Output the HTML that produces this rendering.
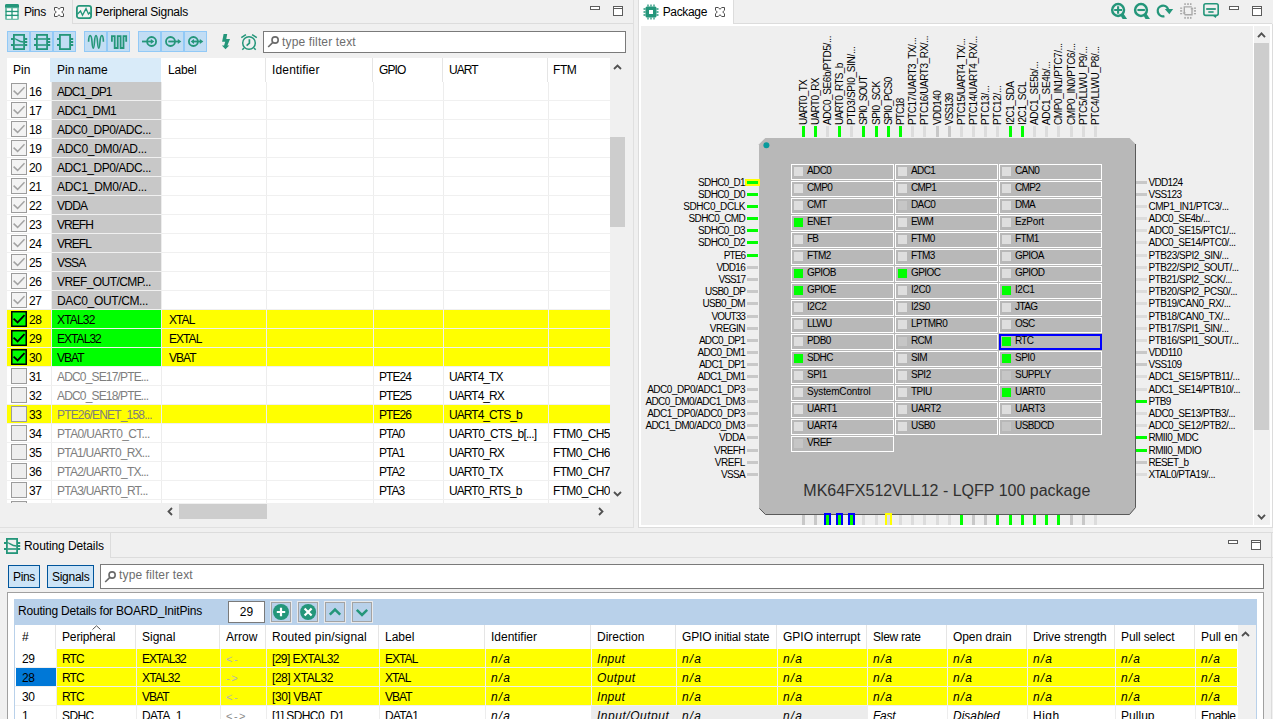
<!DOCTYPE html>
<html><head><meta charset="utf-8"><title>Pins</title><style>
html,body{margin:0;padding:0;}
html{width:1273px;height:719px;overflow:clip;background:#f0f0f0;}
body{width:1273px;height:719px;overflow:clip;position:relative;background:#f0f0f0;font-family:"Liberation Sans",sans-serif;font-size:12px;color:#000;}
div{position:absolute;box-sizing:border-box;}
.t{white-space:nowrap;}
.p{white-space:nowrap;font-size:10px;line-height:11px;height:11px;color:#000;}
svg{position:absolute;overflow:visible;}
</style></head><body>
<div style="left:72px;top:23px;width:562px;height:1px;background:#dcdcdc;"></div>
<div style="left:72px;top:0px;width:1px;height:24px;background:#dcdcdc;"></div>
<div style="left:633px;top:0px;width:1px;height:528px;background:#e0e0e0;"></div>
<div style="left:0px;top:527px;width:634px;height:1px;background:#e0e0e0;"></div>
<div class="t" style="left:24px;top:3px;line-height:18px;height:18px;letter-spacing:-0.4px;">Pins</div>
<div class="t" style="left:95px;top:3px;line-height:18px;height:18px;letter-spacing:-0.25px;">Peripheral Signals</div>
<svg style="left:54px;top:7px" width="10" height="10" viewBox="0 0 10 10"><path d="M0.5 0.5H3.3L5 2.3L6.7 0.5H9.5V3.3L7.7 5L9.5 6.7V9.5H6.7L5 7.7L3.3 9.5H0.5V6.7L2.3 5L0.5 3.3Z" fill="#fff" stroke="#4f4f4f" stroke-width="1"/></svg>
<svg style="left:5px;top:4px" width="14" height="16" viewBox="0 0 14 16"><rect x="0" y="0" width="14" height="16" rx="1.6" fill="#74bfab"/><path d="M0 3.6V1.6A1.6 1.6 0 0 1 1.6 0H12.4A1.6 1.6 0 0 1 14 1.6V3.6Z" fill="#24967a"/><path d="M0.6 7.4H13.4M0.6 11.3H13.4" stroke="#24967a" stroke-width="1.5"/><g fill="#fff"><rect x="2" y="4.3" width="4" height="2.4"/><rect x="8" y="4.3" width="4.1" height="2.4"/><rect x="2" y="8.2" width="4" height="2.4"/><rect x="8" y="8.2" width="4.1" height="2.4"/><rect x="2" y="12.1" width="4" height="2.6"/><rect x="8" y="12.1" width="4.1" height="2.6"/></g></svg>
<svg style="left:76px;top:5px" width="16" height="14" viewBox="0 0 16 14"><rect x="0.9" y="0.9" width="14.2" height="12.2" rx="2.2" fill="#f4f4f4" stroke="#24967a" stroke-width="1.8"/><path d="M1.4 9.3L4.5 6L6.5 10.3L10 3.6L12.4 9.1L13.6 7.6L15 9.5" stroke="#24967a" stroke-width="1.3" fill="none"/></svg>
<div style="left:590px;top:6px;width:10px;height:4px;background:#fff;border:1px solid #5c5c5c;"></div>
<div style="left:613px;top:6px;width:10px;height:10px;background:#fff;border:1px solid #5c5c5c;"></div>
<div style="left:613px;top:8px;width:10px;height:1px;background:#5c5c5c;"></div>
<div style="left:7px;top:31px;width:23px;height:21px;background:#c2ddf4;border:1px solid #92c9f6;"></div>
<div style="left:30px;top:31px;width:23px;height:21px;background:#c2ddf4;border:1px solid #92c9f6;"></div>
<div style="left:53px;top:31px;width:23px;height:21px;background:#c2ddf4;border:1px solid #92c9f6;"></div>
<div style="left:84px;top:31px;width:23px;height:21px;background:#c2ddf4;border:1px solid #92c9f6;"></div>
<div style="left:107px;top:31px;width:23px;height:21px;background:#c2ddf4;border:1px solid #92c9f6;"></div>
<div style="left:138px;top:31px;width:23px;height:21px;background:#c2ddf4;border:1px solid #92c9f6;"></div>
<div style="left:161px;top:31px;width:23px;height:21px;background:#c2ddf4;border:1px solid #92c9f6;"></div>
<div style="left:184px;top:31px;width:23px;height:21px;background:#c2ddf4;border:1px solid #92c9f6;"></div>
<svg style="left:7px;top:31px" width="23" height="21" viewBox="0 0 23 21" fill="none" stroke="#24967a"><rect x="6.9" y="3.9" width="10.2" height="14.2" stroke-width="1.8"/><path d="M4 8H6.5M4 14H6.5M17.5 8H20.2M17.5 11H20.2M17.5 14H20.2" stroke-width="1.9"/><path d="M7.5 14H16.5" stroke-width="1.6"/><path d="M7.5 7.6C10 8 11.5 11 16.5 11" stroke-width="1.4"/></svg>
<svg style="left:30px;top:31px" width="23" height="21" viewBox="0 0 23 21" fill="none" stroke="#24967a"><rect x="6.9" y="3.9" width="10.2" height="14.2" stroke-width="1.8"/><path d="M4 8H6.5M4 14H6.5M17.5 8H20.2M17.5 11H20.2M17.5 14H20.2" stroke-width="1.9"/><path d="M7.5 8H16.5M7.5 14H16.5" stroke-width="1.6"/></svg>
<svg style="left:53px;top:31px" width="23" height="21" viewBox="0 0 23 21" fill="none" stroke="#24967a"><rect x="6.9" y="3.9" width="10.2" height="14.2" stroke-width="1.8"/><path d="M4 8H6.5M4 14H6.5M17.5 8H20.2M17.5 11H20.2M17.5 14H20.2" stroke-width="1.9"/></svg>
<svg style="left:84px;top:31px" width="23" height="21" viewBox="0 0 23 21" fill="none" stroke="#24967a"><path d="M4.6 10.8C4.8 2.5 7.4 2.5 8 10.8C8.6 19.3 9.9 19.3 10.5 10.8C11.1 2.5 12.9 2.5 13.5 10.8C14.1 19.3 15.4 19.3 16 10.8C16.6 2.5 19.2 2.5 19.4 10.8" stroke-width="1.6"/></svg>
<svg style="left:107px;top:31px" width="23" height="21" viewBox="0 0 23 21" fill="none" stroke="#24967a"><path d="M4.9 10.8V5.1H7.7V17H10.7V5.1H13.6V17H16.5V5.1H19.2V10.8" stroke-width="1.8"/></svg>
<svg style="left:138px;top:31px" width="23" height="21" viewBox="0 0 23 21" fill="none" stroke="#24967a"><circle cx="13.6" cy="10.5" r="4.5" stroke-width="1.8"/><path d="M4 10.5H13.5" stroke-width="1.8"/><path d="M12.8 8.1L16.3 10.5L12.8 12.9Z" fill="#24967a" stroke="none"/></svg>
<svg style="left:161px;top:31px" width="23" height="21" viewBox="0 0 23 21" fill="none" stroke="#24967a"><circle cx="9.5" cy="10.5" r="4.5" stroke-width="1.8"/><path d="M7.3 10.5H17.5" stroke-width="1.8"/><path d="M16.8 8.1L20.3 10.5L16.8 12.9Z" fill="#24967a" stroke="none"/></svg>
<svg style="left:184px;top:31px" width="23" height="21" viewBox="0 0 23 21" fill="none" stroke="#24967a"><circle cx="9.4" cy="10.5" r="4.5" stroke-width="1.8"/><path d="M8.5 10.5H16.5" stroke-width="1.8"/><path d="M15.8 8.1L19.3 10.5L15.8 12.9Z" fill="#24967a" stroke="none"/><path d="M10 8.1L6.7 10.5L10 12.9Z" fill="#24967a" stroke="none"/></svg>
<svg style="left:0;top:0" width="270" height="60" viewBox="0 0 270 60"><path d="M223.6 34H227.2L226.3 38.9H230L227.4 45.4H229.3L225.5 49.3L221.9 45.4H224.1L225.2 41.8H222.1Z" fill="#24967a"/><g fill="none" stroke="#24967a" stroke-width="1.5"><circle cx="249" cy="43" r="6.3"/><path d="M249.4 39.3V43.2L246.6 45.6" stroke-width="1.7"/><path d="M241.3 37.7L245.9 34.6M252.1 34.6L256.8 37.7M244 48L242.3 49.8M254 48L255.7 49.8"/></g></svg>
<div style="left:263px;top:31px;width:363px;height:22px;background:#fff;border:1px solid #7a7a7a;"></div>
<svg style="left:267px;top:35px" width="12" height="13" viewBox="0 0 12 13" fill="none" stroke="#6a6a6a" stroke-width="1.6"><circle cx="8.1" cy="5" r="3.1"/><path d="M5.6 7.6L1.2 12" stroke-width="1.6"/></svg>
<div class="t" style="left:282px;top:33px;line-height:18px;height:18px;color:#6d6d6d;letter-spacing:0.15px;">type filter text</div>
<div style="left:7px;top:58px;width:603px;height:445px;background:#fff;"></div>
<div style="left:50px;top:58px;width:111px;height:24px;background:#d9ebf9;"></div>
<div class="t" style="left:13px;top:60px;line-height:20px;height:20px;">Pin</div>
<div class="t" style="left:57px;top:60px;line-height:20px;height:20px;">Pin name</div>
<div class="t" style="left:168px;top:60px;line-height:20px;height:20px;letter-spacing:-0.2px;">Label</div>
<div class="t" style="left:272px;top:60px;line-height:20px;height:20px;letter-spacing:0.15px;">Identifier</div>
<div class="t" style="left:379px;top:60px;line-height:20px;height:20px;letter-spacing:-0.902px;">GPIO</div>
<div class="t" style="left:449px;top:60px;line-height:20px;height:20px;letter-spacing:-0.95px;">UART</div>
<div class="t" style="left:553px;top:60px;line-height:20px;height:20px;letter-spacing:-0.427px;">FTM</div>
<div style="left:51px;top:82px;width:1px;height:421px;background:#ededed;"></div>
<div style="left:161px;top:82px;width:1px;height:421px;background:#ededed;"></div>
<div style="left:265px;top:58px;width:1px;height:24px;background:#e5e5e5;"></div>
<div style="left:266px;top:82px;width:1px;height:421px;background:#ededed;"></div>
<div style="left:372px;top:58px;width:1px;height:24px;background:#e5e5e5;"></div>
<div style="left:373px;top:82px;width:1px;height:421px;background:#ededed;"></div>
<div style="left:442px;top:58px;width:1px;height:24px;background:#e5e5e5;"></div>
<div style="left:443px;top:82px;width:1px;height:421px;background:#ededed;"></div>
<div style="left:547px;top:58px;width:1px;height:24px;background:#e5e5e5;"></div>
<div style="left:548px;top:82px;width:1px;height:421px;background:#ededed;"></div>
<div style="left:7px;top:100px;width:603px;height:1px;background:#f0f0f0;"></div>
<div style="left:52px;top:82px;width:109px;height:18px;background:#c8c8c8;"></div>
<svg style="left:11px;top:83px" width="16" height="16" viewBox="0 0 16 16"><rect x="0.5" y="0.5" width="15" height="15" fill="#f3f3f3" stroke="#9c9c9c"/><path d="M2.6 7.6L6.6 11.4L13.5 4.2" fill="none" stroke="#a2a2a2" stroke-width="1.5"/></svg>
<div class="t" style="left:29px;top:83px;line-height:19px;height:19px;letter-spacing:-0.5px;">16</div>
<div class="t" style="left:57px;top:83px;line-height:19px;height:19px;letter-spacing:-0.947px;width:104px;overflow:hidden;">ADC1_DP1</div>
<div style="left:7px;top:119px;width:603px;height:1px;background:#f0f0f0;"></div>
<div style="left:52px;top:101px;width:109px;height:18px;background:#c8c8c8;"></div>
<svg style="left:11px;top:102px" width="16" height="16" viewBox="0 0 16 16"><rect x="0.5" y="0.5" width="15" height="15" fill="#f3f3f3" stroke="#9c9c9c"/><path d="M2.6 7.6L6.6 11.4L13.5 4.2" fill="none" stroke="#a2a2a2" stroke-width="1.5"/></svg>
<div class="t" style="left:29px;top:102px;line-height:19px;height:19px;letter-spacing:-0.5px;">17</div>
<div class="t" style="left:57px;top:102px;line-height:19px;height:19px;letter-spacing:-0.617px;width:104px;overflow:hidden;">ADC1_DM1</div>
<div style="left:7px;top:138px;width:603px;height:1px;background:#f0f0f0;"></div>
<div style="left:52px;top:120px;width:109px;height:18px;background:#c8c8c8;"></div>
<svg style="left:11px;top:121px" width="16" height="16" viewBox="0 0 16 16"><rect x="0.5" y="0.5" width="15" height="15" fill="#f3f3f3" stroke="#9c9c9c"/><path d="M2.6 7.6L6.6 11.4L13.5 4.2" fill="none" stroke="#a2a2a2" stroke-width="1.5"/></svg>
<div class="t" style="left:29px;top:121px;line-height:19px;height:19px;letter-spacing:-0.5px;">18</div>
<div class="t" style="left:57px;top:121px;line-height:19px;height:19px;letter-spacing:-0.45px;width:104px;overflow:hidden;">ADC0_DP0/ADC...</div>
<div style="left:7px;top:157px;width:603px;height:1px;background:#f0f0f0;"></div>
<div style="left:52px;top:139px;width:109px;height:18px;background:#c8c8c8;"></div>
<svg style="left:11px;top:140px" width="16" height="16" viewBox="0 0 16 16"><rect x="0.5" y="0.5" width="15" height="15" fill="#f3f3f3" stroke="#9c9c9c"/><path d="M2.6 7.6L6.6 11.4L13.5 4.2" fill="none" stroke="#a2a2a2" stroke-width="1.5"/></svg>
<div class="t" style="left:29px;top:140px;line-height:19px;height:19px;letter-spacing:-0.5px;">19</div>
<div class="t" style="left:57px;top:140px;line-height:19px;height:19px;letter-spacing:-0.302px;width:104px;overflow:hidden;">ADC0_DM0/AD...</div>
<div style="left:7px;top:176px;width:603px;height:1px;background:#f0f0f0;"></div>
<div style="left:52px;top:158px;width:109px;height:18px;background:#c8c8c8;"></div>
<svg style="left:11px;top:159px" width="16" height="16" viewBox="0 0 16 16"><rect x="0.5" y="0.5" width="15" height="15" fill="#f3f3f3" stroke="#9c9c9c"/><path d="M2.6 7.6L6.6 11.4L13.5 4.2" fill="none" stroke="#a2a2a2" stroke-width="1.5"/></svg>
<div class="t" style="left:29px;top:159px;line-height:19px;height:19px;letter-spacing:-0.5px;">20</div>
<div class="t" style="left:57px;top:159px;line-height:19px;height:19px;letter-spacing:-0.45px;width:104px;overflow:hidden;">ADC1_DP0/ADC...</div>
<div style="left:7px;top:195px;width:603px;height:1px;background:#f0f0f0;"></div>
<div style="left:52px;top:177px;width:109px;height:18px;background:#c8c8c8;"></div>
<svg style="left:11px;top:178px" width="16" height="16" viewBox="0 0 16 16"><rect x="0.5" y="0.5" width="15" height="15" fill="#f3f3f3" stroke="#9c9c9c"/><path d="M2.6 7.6L6.6 11.4L13.5 4.2" fill="none" stroke="#a2a2a2" stroke-width="1.5"/></svg>
<div class="t" style="left:29px;top:178px;line-height:19px;height:19px;letter-spacing:-0.5px;">21</div>
<div class="t" style="left:57px;top:178px;line-height:19px;height:19px;letter-spacing:-0.302px;width:104px;overflow:hidden;">ADC1_DM0/AD...</div>
<div style="left:7px;top:214px;width:603px;height:1px;background:#f0f0f0;"></div>
<div style="left:52px;top:196px;width:109px;height:18px;background:#c8c8c8;"></div>
<svg style="left:11px;top:197px" width="16" height="16" viewBox="0 0 16 16"><rect x="0.5" y="0.5" width="15" height="15" fill="#f3f3f3" stroke="#9c9c9c"/><path d="M2.6 7.6L6.6 11.4L13.5 4.2" fill="none" stroke="#a2a2a2" stroke-width="1.5"/></svg>
<div class="t" style="left:29px;top:197px;line-height:19px;height:19px;letter-spacing:-0.5px;">22</div>
<div class="t" style="left:57px;top:197px;line-height:19px;height:19px;letter-spacing:-0.747px;width:104px;overflow:hidden;">VDDA</div>
<div style="left:7px;top:233px;width:603px;height:1px;background:#f0f0f0;"></div>
<div style="left:52px;top:215px;width:109px;height:18px;background:#c8c8c8;"></div>
<svg style="left:11px;top:216px" width="16" height="16" viewBox="0 0 16 16"><rect x="0.5" y="0.5" width="15" height="15" fill="#f3f3f3" stroke="#9c9c9c"/><path d="M2.6 7.6L6.6 11.4L13.5 4.2" fill="none" stroke="#a2a2a2" stroke-width="1.5"/></svg>
<div class="t" style="left:29px;top:216px;line-height:19px;height:19px;letter-spacing:-0.5px;">23</div>
<div class="t" style="left:57px;top:216px;line-height:19px;height:19px;letter-spacing:-0.95px;width:104px;overflow:hidden;">VREFH</div>
<div style="left:7px;top:252px;width:603px;height:1px;background:#f0f0f0;"></div>
<div style="left:52px;top:234px;width:109px;height:18px;background:#c8c8c8;"></div>
<svg style="left:11px;top:235px" width="16" height="16" viewBox="0 0 16 16"><rect x="0.5" y="0.5" width="15" height="15" fill="#f3f3f3" stroke="#9c9c9c"/><path d="M2.6 7.6L6.6 11.4L13.5 4.2" fill="none" stroke="#a2a2a2" stroke-width="1.5"/></svg>
<div class="t" style="left:29px;top:235px;line-height:19px;height:19px;letter-spacing:-0.5px;">24</div>
<div class="t" style="left:57px;top:235px;line-height:19px;height:19px;letter-spacing:-0.95px;width:104px;overflow:hidden;">VREFL</div>
<div style="left:7px;top:271px;width:603px;height:1px;background:#f0f0f0;"></div>
<div style="left:52px;top:253px;width:109px;height:18px;background:#c8c8c8;"></div>
<svg style="left:11px;top:254px" width="16" height="16" viewBox="0 0 16 16"><rect x="0.5" y="0.5" width="15" height="15" fill="#f3f3f3" stroke="#9c9c9c"/><path d="M2.6 7.6L6.6 11.4L13.5 4.2" fill="none" stroke="#a2a2a2" stroke-width="1.5"/></svg>
<div class="t" style="left:29px;top:254px;line-height:19px;height:19px;letter-spacing:-0.5px;">25</div>
<div class="t" style="left:57px;top:254px;line-height:19px;height:19px;letter-spacing:-0.95px;width:104px;overflow:hidden;">VSSA</div>
<div style="left:7px;top:290px;width:603px;height:1px;background:#f0f0f0;"></div>
<div style="left:52px;top:272px;width:109px;height:18px;background:#c8c8c8;"></div>
<svg style="left:11px;top:273px" width="16" height="16" viewBox="0 0 16 16"><rect x="0.5" y="0.5" width="15" height="15" fill="#f3f3f3" stroke="#9c9c9c"/><path d="M2.6 7.6L6.6 11.4L13.5 4.2" fill="none" stroke="#a2a2a2" stroke-width="1.5"/></svg>
<div class="t" style="left:29px;top:273px;line-height:19px;height:19px;letter-spacing:-0.5px;">26</div>
<div class="t" style="left:57px;top:273px;line-height:19px;height:19px;letter-spacing:-0.576px;width:104px;overflow:hidden;">VREF_OUT/CMP...</div>
<div style="left:7px;top:309px;width:603px;height:1px;background:#f0f0f0;"></div>
<div style="left:52px;top:291px;width:109px;height:18px;background:#c8c8c8;"></div>
<svg style="left:11px;top:292px" width="16" height="16" viewBox="0 0 16 16"><rect x="0.5" y="0.5" width="15" height="15" fill="#f3f3f3" stroke="#9c9c9c"/><path d="M2.6 7.6L6.6 11.4L13.5 4.2" fill="none" stroke="#a2a2a2" stroke-width="1.5"/></svg>
<div class="t" style="left:29px;top:292px;line-height:19px;height:19px;letter-spacing:-0.5px;">27</div>
<div class="t" style="left:57px;top:292px;line-height:19px;height:19px;letter-spacing:-0.355px;width:104px;overflow:hidden;">DAC0_OUT/CM...</div>
<div style="left:7px;top:328px;width:603px;height:1px;background:#f0f0f0;"></div>
<div style="left:7px;top:310px;width:44px;height:18px;background:#ffff00;"></div>
<div style="left:162px;top:310px;width:448px;height:18px;background:#ffff00;"></div>
<div style="left:266px;top:310px;width:1px;height:18px;background:#efefef;"></div>
<div style="left:373px;top:310px;width:1px;height:18px;background:#efefef;"></div>
<div style="left:443px;top:310px;width:1px;height:18px;background:#efefef;"></div>
<div style="left:548px;top:310px;width:1px;height:18px;background:#efefef;"></div>
<div style="left:52px;top:310px;width:109px;height:18px;background:#00ff00;"></div>
<svg style="left:11px;top:311px" width="16" height="16" viewBox="0 0 16 16"><rect x="0.75" y="0.75" width="14.5" height="14.5" fill="#00ff00" stroke="#000" stroke-width="1.5"/><path d="M2.6 7.6L6.6 11.4L13.5 4.2" fill="none" stroke="#000" stroke-width="1.8"/></svg>
<div class="t" style="left:29px;top:311px;line-height:19px;height:19px;letter-spacing:-0.5px;">28</div>
<div class="t" style="left:57px;top:311px;line-height:19px;height:19px;letter-spacing:-0.813px;width:104px;overflow:hidden;">XTAL32</div>
<div class="t" style="left:169px;top:311px;line-height:19px;height:19px;letter-spacing:-0.94px;">XTAL</div>
<div style="left:7px;top:347px;width:603px;height:1px;background:#f0f0f0;"></div>
<div style="left:7px;top:329px;width:44px;height:18px;background:#ffff00;"></div>
<div style="left:162px;top:329px;width:448px;height:18px;background:#ffff00;"></div>
<div style="left:266px;top:329px;width:1px;height:18px;background:#efefef;"></div>
<div style="left:373px;top:329px;width:1px;height:18px;background:#efefef;"></div>
<div style="left:443px;top:329px;width:1px;height:18px;background:#efefef;"></div>
<div style="left:548px;top:329px;width:1px;height:18px;background:#efefef;"></div>
<div style="left:52px;top:329px;width:109px;height:18px;background:#00ff00;"></div>
<svg style="left:11px;top:330px" width="16" height="16" viewBox="0 0 16 16"><rect x="0.75" y="0.75" width="14.5" height="14.5" fill="#00ff00" stroke="#000" stroke-width="1.5"/><path d="M2.6 7.6L6.6 11.4L13.5 4.2" fill="none" stroke="#000" stroke-width="1.8"/></svg>
<div class="t" style="left:29px;top:330px;line-height:19px;height:19px;letter-spacing:-0.5px;">29</div>
<div class="t" style="left:57px;top:330px;line-height:19px;height:19px;letter-spacing:-0.95px;width:104px;overflow:hidden;">EXTAL32</div>
<div class="t" style="left:169px;top:330px;line-height:19px;height:19px;letter-spacing:-0.95px;">EXTAL</div>
<div style="left:7px;top:366px;width:603px;height:1px;background:#f0f0f0;"></div>
<div style="left:7px;top:348px;width:44px;height:18px;background:#ffff00;"></div>
<div style="left:162px;top:348px;width:448px;height:18px;background:#ffff00;"></div>
<div style="left:266px;top:348px;width:1px;height:18px;background:#efefef;"></div>
<div style="left:373px;top:348px;width:1px;height:18px;background:#efefef;"></div>
<div style="left:443px;top:348px;width:1px;height:18px;background:#efefef;"></div>
<div style="left:548px;top:348px;width:1px;height:18px;background:#efefef;"></div>
<div style="left:52px;top:348px;width:109px;height:18px;background:#00ff00;"></div>
<svg style="left:11px;top:349px" width="16" height="16" viewBox="0 0 16 16"><rect x="0.75" y="0.75" width="14.5" height="14.5" fill="#00ff00" stroke="#000" stroke-width="1.5"/><path d="M2.6 7.6L6.6 11.4L13.5 4.2" fill="none" stroke="#000" stroke-width="1.8"/></svg>
<div class="t" style="left:29px;top:349px;line-height:19px;height:19px;letter-spacing:-0.5px;">30</div>
<div class="t" style="left:57px;top:349px;line-height:19px;height:19px;letter-spacing:-0.95px;width:104px;overflow:hidden;">VBAT</div>
<div class="t" style="left:169px;top:349px;line-height:19px;height:19px;letter-spacing:-0.95px;">VBAT</div>
<div style="left:7px;top:385px;width:603px;height:1px;background:#f0f0f0;"></div>
<svg style="left:11px;top:368px" width="16" height="16" viewBox="0 0 16 16"><rect x="0.5" y="0.5" width="15" height="15" fill="#eeeeee" stroke="#9c9c9c"/></svg>
<div class="t" style="left:29px;top:368px;line-height:19px;height:19px;letter-spacing:-0.5px;">31</div>
<div class="t" style="left:57px;top:368px;line-height:19px;height:19px;color:#7e7e7e;letter-spacing:-0.834px;width:104px;overflow:hidden;">ADC0_SE17/PTE...</div>
<div class="t" style="left:379px;top:368px;line-height:19px;height:19px;letter-spacing:-0.95px;">PTE24</div>
<div class="t" style="left:449px;top:368px;line-height:19px;height:19px;letter-spacing:-0.95px;">UART4_TX</div>
<div style="left:7px;top:404px;width:603px;height:1px;background:#f0f0f0;"></div>
<svg style="left:11px;top:387px" width="16" height="16" viewBox="0 0 16 16"><rect x="0.5" y="0.5" width="15" height="15" fill="#eeeeee" stroke="#9c9c9c"/></svg>
<div class="t" style="left:29px;top:387px;line-height:19px;height:19px;letter-spacing:-0.5px;">32</div>
<div class="t" style="left:57px;top:387px;line-height:19px;height:19px;color:#7e7e7e;letter-spacing:-0.834px;width:104px;overflow:hidden;">ADC0_SE18/PTE...</div>
<div class="t" style="left:379px;top:387px;line-height:19px;height:19px;letter-spacing:-0.95px;">PTE25</div>
<div class="t" style="left:449px;top:387px;line-height:19px;height:19px;letter-spacing:-0.95px;">UART4_RX</div>
<div style="left:7px;top:423px;width:603px;height:1px;background:#f0f0f0;"></div>
<div style="left:7px;top:405px;width:44px;height:18px;background:#ffff00;"></div>
<div style="left:162px;top:405px;width:448px;height:18px;background:#ffff00;"></div>
<div style="left:266px;top:405px;width:1px;height:18px;background:#efefef;"></div>
<div style="left:373px;top:405px;width:1px;height:18px;background:#efefef;"></div>
<div style="left:443px;top:405px;width:1px;height:18px;background:#efefef;"></div>
<div style="left:548px;top:405px;width:1px;height:18px;background:#efefef;"></div>
<div style="left:52px;top:405px;width:109px;height:18px;background:#ffff00;"></div>
<svg style="left:11px;top:406px" width="16" height="16" viewBox="0 0 16 16"><rect x="0.5" y="0.5" width="15" height="15" fill="#eeeeee" stroke="#9c9c9c"/></svg>
<div class="t" style="left:29px;top:406px;line-height:19px;height:19px;letter-spacing:-0.5px;">33</div>
<div class="t" style="left:57px;top:406px;line-height:19px;height:19px;color:#7e7e7e;letter-spacing:-0.826px;width:104px;overflow:hidden;">PTE26/ENET_158...</div>
<div class="t" style="left:379px;top:406px;line-height:19px;height:19px;letter-spacing:-0.95px;">PTE26</div>
<div class="t" style="left:449px;top:406px;line-height:19px;height:19px;letter-spacing:-0.95px;">UART4_CTS_b</div>
<div style="left:7px;top:442px;width:603px;height:1px;background:#f0f0f0;"></div>
<svg style="left:11px;top:425px" width="16" height="16" viewBox="0 0 16 16"><rect x="0.5" y="0.5" width="15" height="15" fill="#eeeeee" stroke="#9c9c9c"/></svg>
<div class="t" style="left:29px;top:425px;line-height:19px;height:19px;letter-spacing:-0.5px;">34</div>
<div class="t" style="left:57px;top:425px;line-height:19px;height:19px;color:#7e7e7e;letter-spacing:-0.641px;width:104px;overflow:hidden;">PTA0/UART0_CT...</div>
<div class="t" style="left:379px;top:425px;line-height:19px;height:19px;letter-spacing:-0.95px;">PTA0</div>
<div class="t" style="left:449px;top:425px;line-height:19px;height:19px;letter-spacing:-0.787px;">UART0_CTS_b[...]</div>
<div class="t" style="left:553px;top:425px;line-height:19px;height:19px;letter-spacing:-0.664px;width:57px;overflow:hidden;">FTM0_CH5</div>
<div style="left:7px;top:461px;width:603px;height:1px;background:#f0f0f0;"></div>
<svg style="left:11px;top:444px" width="16" height="16" viewBox="0 0 16 16"><rect x="0.5" y="0.5" width="15" height="15" fill="#eeeeee" stroke="#9c9c9c"/></svg>
<div class="t" style="left:29px;top:444px;line-height:19px;height:19px;letter-spacing:-0.5px;">35</div>
<div class="t" style="left:57px;top:444px;line-height:19px;height:19px;color:#7e7e7e;letter-spacing:-0.775px;width:104px;overflow:hidden;">PTA1/UART0_RX...</div>
<div class="t" style="left:379px;top:444px;line-height:19px;height:19px;letter-spacing:-0.95px;">PTA1</div>
<div class="t" style="left:449px;top:444px;line-height:19px;height:19px;letter-spacing:-0.95px;">UART0_RX</div>
<div class="t" style="left:553px;top:444px;line-height:19px;height:19px;letter-spacing:-0.664px;width:57px;overflow:hidden;">FTM0_CH6</div>
<div style="left:7px;top:480px;width:603px;height:1px;background:#f0f0f0;"></div>
<svg style="left:11px;top:463px" width="16" height="16" viewBox="0 0 16 16"><rect x="0.5" y="0.5" width="15" height="15" fill="#eeeeee" stroke="#9c9c9c"/></svg>
<div class="t" style="left:29px;top:463px;line-height:19px;height:19px;letter-spacing:-0.5px;">36</div>
<div class="t" style="left:57px;top:463px;line-height:19px;height:19px;color:#7e7e7e;letter-spacing:-0.759px;width:104px;overflow:hidden;">PTA2/UART0_TX...</div>
<div class="t" style="left:379px;top:463px;line-height:19px;height:19px;letter-spacing:-0.95px;">PTA2</div>
<div class="t" style="left:449px;top:463px;line-height:19px;height:19px;letter-spacing:-0.95px;">UART0_TX</div>
<div class="t" style="left:553px;top:463px;line-height:19px;height:19px;letter-spacing:-0.664px;width:57px;overflow:hidden;">FTM0_CH7</div>
<div style="left:7px;top:499px;width:603px;height:1px;background:#f0f0f0;"></div>
<svg style="left:11px;top:482px" width="16" height="16" viewBox="0 0 16 16"><rect x="0.5" y="0.5" width="15" height="15" fill="#eeeeee" stroke="#9c9c9c"/></svg>
<div class="t" style="left:29px;top:482px;line-height:19px;height:19px;letter-spacing:-0.5px;">37</div>
<div class="t" style="left:57px;top:482px;line-height:19px;height:19px;color:#7e7e7e;letter-spacing:-0.76px;width:104px;overflow:hidden;">PTA3/UART0_RT...</div>
<div class="t" style="left:379px;top:482px;line-height:19px;height:19px;letter-spacing:-0.95px;">PTA3</div>
<div class="t" style="left:449px;top:482px;line-height:19px;height:19px;letter-spacing:-0.95px;">UART0_RTS_b</div>
<div class="t" style="left:553px;top:482px;line-height:19px;height:19px;letter-spacing:-0.664px;width:57px;overflow:hidden;">FTM0_CH0</div>
<div style="left:11px;top:501px;width:16px;height:2px;background:#eeeeee;border:1px solid #9c9c9c;border-bottom:none;"></div>
<div style="left:610px;top:58px;width:17px;height:445px;background:#f0f0f0;"></div>
<div style="left:610px;top:137px;width:15px;height:90px;background:#cdcdcd;"></div>
<svg style="left:613px;top:64px" width="9" height="6" viewBox="0 0 9 6"><path d="M1 5L4.5 1.5L8 5" fill="none" stroke="#505050" stroke-width="1.8"/></svg>
<svg style="left:613px;top:491px" width="9" height="6" viewBox="0 0 9 6"><path d="M1 1L4.5 4.5L8 1" fill="none" stroke="#505050" stroke-width="1.8"/></svg>
<div style="left:7px;top:503px;width:620px;height:20px;background:#f0f0f0;"></div>
<div style="left:179px;top:504px;width:88px;height:15px;background:#cdcdcd;"></div>
<svg style="left:167px;top:507px" width="6" height="9" viewBox="0 0 6 9"><path d="M5 1L1.5 4.5L5 8" fill="none" stroke="#505050" stroke-width="1.8"/></svg>
<svg style="left:598px;top:507px" width="6" height="9" viewBox="0 0 6 9"><path d="M1 1L4.5 4.5L1 8" fill="none" stroke="#505050" stroke-width="1.8"/></svg>
<div style="left:639px;top:0px;width:94px;height:24px;background:#fff;"></div>
<div style="left:733px;top:23px;width:539px;height:1px;background:#dcdcdc;"></div>
<div style="left:733px;top:0px;width:1px;height:24px;background:#dcdcdc;"></div>
<div style="left:638px;top:0px;width:1px;height:528px;background:#dcdcdc;"></div>
<div style="left:639px;top:24px;width:633px;height:2px;background:#fff;"></div>
<div style="left:639px;top:24px;width:2px;height:503px;background:#fff;"></div>
<div style="left:639px;top:525px;width:633px;height:2px;background:#fff;"></div>
<div style="left:638px;top:527px;width:634px;height:1px;background:#dcdcdc;"></div>
<div style="left:1270px;top:24px;width:2px;height:503px;background:#fff;"></div>
<div style="left:1272px;top:24px;width:1px;height:504px;background:#dcdcdc;"></div>
<div style="left:641px;top:26px;width:612px;height:499px;background:#efefef;"></div>
<div class="t" style="left:662.7px;top:3px;line-height:18px;height:18px;letter-spacing:-0.333px;">Package</div>
<svg style="left:715px;top:7px" width="10" height="10" viewBox="0 0 10 10"><path d="M0.5 0.5H3.3L5 2.3L6.7 0.5H9.5V3.3L7.7 5L9.5 6.7V9.5H6.7L5 7.7L3.3 9.5H0.5V6.7L2.3 5L0.5 3.3Z" fill="#fff" stroke="#4f4f4f" stroke-width="1"/></svg>
<svg style="left:643px;top:4px" width="16" height="16" viewBox="0 0 16 16"><rect x="2.5" y="2.5" width="11" height="11" rx="1.5" fill="#24967a"/><rect x="6" y="6" width="4" height="4" fill="#fff"/><path d="M5 0.5V2.5M8 0.5V2.5M11 0.5V2.5M5 13.5V15.5M8 13.5V15.5M11 13.5V15.5M0.5 5H2.5M0.5 8H2.5M0.5 11H2.5M13.5 5H15.5M13.5 8H15.5M13.5 11H15.5" stroke="#24967a" stroke-width="1.3"/></svg>
<svg style="left:1100px;top:0" width="130" height="24" viewBox="1100 0 130 24" fill="none" stroke="#24967a">
<circle cx="1118.1" cy="10" r="5.9" stroke-width="2.5"/><path d="M1120.6 15.4L1123.4 13.6L1127.1 18.9H1122.6Z" fill="#24967a" stroke="none"/><path d="M1114.2 10H1122M1118.1 6.2V13.8" stroke-width="2.1"/>
<circle cx="1141" cy="10" r="5.9" stroke-width="2.5"/><path d="M1143.5 15.4L1146.3 13.6L1150 18.9H1145.5Z" fill="#24967a" stroke="none"/><path d="M1137.4 10H1144.9" stroke-width="2.1"/>
<path d="M1164.4 16.1A5.3 5.3 0 1 1 1168.1 9.4" stroke-width="2.3"/><path d="M1164.8 9.1H1173.2L1169.3 14.3Z" fill="#24967a" stroke="none"/>
<rect x="1203.9" y="3.8" width="14.3" height="11.6" rx="1.8" stroke-width="1.6"/><path d="M1213.2 16H1216.6L1215.6 17.9Z" fill="#24967a" stroke="none"/><path d="M1206.2 9H1215.8" stroke-width="1.8"/><path d="M1208.3 12H1213.6" stroke-width="1.6"/>
</svg>
<svg style="left:1180px;top:3px" width="16" height="16" viewBox="0 0 16 16"><g fill="#a9a9a9"><rect x="4.3" y="0.2" width="1.5" height="1.8"/><rect x="7.2" y="0.2" width="1.6" height="1.8"/><rect x="10" y="0.2" width="1.5" height="1.8"/><rect x="4.3" y="13.9" width="1.5" height="1.9"/><rect x="7.2" y="13.9" width="1.6" height="1.9"/><rect x="10" y="13.9" width="1.5" height="1.9"/><rect x="0.1" y="4.5" width="2.1" height="1.3"/><rect x="0.1" y="7.1" width="2.1" height="1.6"/><rect x="0.1" y="10" width="2.1" height="1.3"/><rect x="13.9" y="4.5" width="2.1" height="1.3"/><rect x="13.9" y="7.1" width="2.1" height="1.6"/><rect x="13.9" y="10" width="2.1" height="1.3"/><path d="M2.7 9.6H5.9L4.3 11.9Z"/><path d="M10.3 6.3H13.6L12 4Z"/></g><path d="M11.8 3.9H4.3V10M4.6 11.8H12V5.8" fill="none" stroke="#a9a9a9" stroke-width="1.4"/></svg>
<div style="left:1229px;top:6px;width:10px;height:4px;background:#fff;border:1px solid #5c5c5c;"></div>
<div style="left:1252px;top:6px;width:10px;height:10px;background:#fff;border:1px solid #5c5c5c;"></div>
<div style="left:1252px;top:8px;width:10px;height:1px;background:#5c5c5c;"></div>
<div style="left:1253px;top:26px;width:1px;height:499px;background:#fff;"></div>
<div style="left:1254px;top:26px;width:16px;height:499px;background:#f0f0f0;"></div>
<div style="left:1254px;top:43px;width:15px;height:387px;background:#cdcdcd;"></div>
<svg style="left:1257px;top:32px" width="9" height="6" viewBox="0 0 9 6"><path d="M1 5.2L4.5 1.4L8 5.2" fill="none" stroke="#505050" stroke-width="1.9"/></svg>
<svg style="left:1257px;top:514px" width="9" height="6" viewBox="0 0 9 6"><path d="M1 0.8L4.5 4.6L8 0.8" fill="none" stroke="#505050" stroke-width="1.9"/></svg>
<svg style="left:0;top:0" width="1273" height="530" viewBox="0 0 1273 530"><path d="M765.3 138H1129.5L1136 144.5V507.5L1129.5 515H765.5L759 508.5V144.3Z" fill="#b8b8b8"/><path d="M1135.5 144V507.5L1129.5 514.5H765.5L759.5 508.5" fill="none" stroke="#5a5a5a" stroke-width="1"/><circle cx="766.4" cy="145.3" r="3" fill="#089a9c"/></svg>
<div style="left:745px;top:179px;width:15px;height:7px;background:#ffff00;"></div>
<div style="left:747px;top:181px;width:11px;height:3px;background:#00ff00;"></div>
<div class="p" style="left:545px;width:200px;text-align:right;top:177.4px;letter-spacing:-0.663px">SDHC0_D1</div>
<div style="left:747px;top:193px;width:11px;height:3px;background:#00ff00;"></div>
<div class="p" style="left:545px;width:200px;text-align:right;top:189.4px;letter-spacing:-0.663px">SDHC0_D0</div>
<div style="left:747px;top:205px;width:11px;height:3px;background:#00ff00;"></div>
<div class="p" style="left:545px;width:200px;text-align:right;top:201.4px;letter-spacing:-0.448px">SDHC0_DCLK</div>
<div style="left:747px;top:217px;width:11px;height:3px;background:#00ff00;"></div>
<div class="p" style="left:545px;width:200px;text-align:right;top:213.4px;letter-spacing:-0.641px">SDHC0_CMD</div>
<div style="left:747px;top:229px;width:11px;height:3px;background:#00ff00;"></div>
<div class="p" style="left:545px;width:200px;text-align:right;top:225.4px;letter-spacing:-0.663px">SDHC0_D3</div>
<div style="left:747px;top:241px;width:11px;height:3px;background:#00ff00;"></div>
<div class="p" style="left:545px;width:200px;text-align:right;top:237.4px;letter-spacing:-0.663px">SDHC0_D2</div>
<div style="left:747px;top:254px;width:11px;height:3px;background:#00ff00;"></div>
<div class="p" style="left:545px;width:200px;text-align:right;top:250.4px;letter-spacing:-0.95px">PTE6</div>
<div style="left:747px;top:266px;width:11px;height:3px;background:#c8c8c8;"></div>
<div class="p" style="left:545px;width:200px;text-align:right;top:262.4px;letter-spacing:-0.734px">VDD16</div>
<div style="left:747px;top:278px;width:11px;height:3px;background:#c8c8c8;"></div>
<div class="p" style="left:545px;width:200px;text-align:right;top:274.4px;letter-spacing:-0.95px">VSS17</div>
<div style="left:747px;top:290px;width:11px;height:3px;background:#c8c8c8;"></div>
<div class="p" style="left:545px;width:200px;text-align:right;top:286.4px;letter-spacing:-0.813px">USB0_DP</div>
<div style="left:747px;top:302px;width:11px;height:3px;background:#c8c8c8;"></div>
<div class="p" style="left:545px;width:200px;text-align:right;top:298.4px;letter-spacing:-0.673px">USB0_DM</div>
<div style="left:747px;top:315px;width:11px;height:3px;background:#c8c8c8;"></div>
<div class="p" style="left:545px;width:200px;text-align:right;top:311.4px;letter-spacing:-0.92px">VOUT33</div>
<div style="left:747px;top:327px;width:11px;height:3px;background:#c8c8c8;"></div>
<div class="p" style="left:545px;width:200px;text-align:right;top:323.4px;letter-spacing:-0.528px">VREGIN</div>
<div style="left:747px;top:339px;width:11px;height:3px;background:#c8c8c8;"></div>
<div class="p" style="left:545px;width:200px;text-align:right;top:335.4px;letter-spacing:-0.698px">ADC0_DP1</div>
<div style="left:747px;top:351px;width:11px;height:3px;background:#c8c8c8;"></div>
<div class="p" style="left:545px;width:200px;text-align:right;top:347.4px;letter-spacing:-0.735px">ADC0_DM1</div>
<div style="left:747px;top:363px;width:11px;height:3px;background:#c8c8c8;"></div>
<div class="p" style="left:545px;width:200px;text-align:right;top:359.4px;letter-spacing:-0.698px">ADC1_DP1</div>
<div style="left:747px;top:375px;width:11px;height:3px;background:#c8c8c8;"></div>
<div class="p" style="left:545px;width:200px;text-align:right;top:371.4px;letter-spacing:-0.735px">ADC1_DM1</div>
<div style="left:747px;top:388px;width:11px;height:3px;background:#c8c8c8;"></div>
<div class="p" style="left:545px;width:200px;text-align:right;top:384.4px;letter-spacing:-0.491px">ADC0_DP0/ADC1_DP3</div>
<div style="left:747px;top:400px;width:11px;height:3px;background:#c8c8c8;"></div>
<div class="p" style="left:545px;width:200px;text-align:right;top:396.4px;letter-spacing:-0.58px">ADC0_DM0/ADC1_DM3</div>
<div style="left:747px;top:412px;width:11px;height:3px;background:#c8c8c8;"></div>
<div class="p" style="left:545px;width:200px;text-align:right;top:408.4px;letter-spacing:-0.491px">ADC1_DP0/ADC0_DP3</div>
<div style="left:747px;top:424px;width:11px;height:3px;background:#c8c8c8;"></div>
<div class="p" style="left:545px;width:200px;text-align:right;top:420.4px;letter-spacing:-0.58px">ADC1_DM0/ADC0_DM3</div>
<div style="left:747px;top:436px;width:11px;height:3px;background:#c8c8c8;"></div>
<div class="p" style="left:545px;width:200px;text-align:right;top:432.4px;letter-spacing:-0.428px">VDDA</div>
<div style="left:747px;top:449px;width:11px;height:3px;background:#c8c8c8;"></div>
<div class="p" style="left:545px;width:200px;text-align:right;top:445.4px;letter-spacing:-0.598px">VREFH</div>
<div style="left:747px;top:461px;width:11px;height:3px;background:#c8c8c8;"></div>
<div class="p" style="left:545px;width:200px;text-align:right;top:457.4px;letter-spacing:-0.383px">VREFL</div>
<div style="left:747px;top:473px;width:11px;height:3px;background:#c8c8c8;"></div>
<div class="p" style="left:545px;width:200px;text-align:right;top:469.4px;letter-spacing:-0.694px">VSSA</div>
<div style="left:1136px;top:181px;width:11px;height:3px;background:#c8c8c8;"></div>
<div class="p" style="left:1148.5px;top:177.4px;letter-spacing:-0.664px">VDD124</div>
<div style="left:1136px;top:193px;width:11px;height:3px;background:#c8c8c8;"></div>
<div class="p" style="left:1148.5px;top:189.4px;letter-spacing:-0.644px">VSS123</div>
<div style="left:1136px;top:205px;width:11px;height:3px;background:#dcdcdc;"></div>
<div class="p" style="left:1148.5px;top:201.4px;letter-spacing:-0.492px">CMP1_IN1/PTC3/...</div>
<div style="left:1136px;top:217px;width:11px;height:3px;background:#dcdcdc;"></div>
<div class="p" style="left:1148.5px;top:213.4px;letter-spacing:-0.502px">ADC0_SE4b/...</div>
<div style="left:1136px;top:229px;width:11px;height:3px;background:#dcdcdc;"></div>
<div class="p" style="left:1148.5px;top:225.4px;letter-spacing:-0.504px">ADC0_SE15/PTC1/...</div>
<div style="left:1136px;top:241px;width:11px;height:3px;background:#dcdcdc;"></div>
<div class="p" style="left:1148.5px;top:237.4px;letter-spacing:-0.504px">ADC0_SE14/PTC0/...</div>
<div style="left:1136px;top:254px;width:11px;height:3px;background:#dcdcdc;"></div>
<div class="p" style="left:1148.5px;top:250.4px;letter-spacing:-0.463px">PTB23/SPI2_SIN/...</div>
<div style="left:1136px;top:266px;width:11px;height:3px;background:#dcdcdc;"></div>
<div class="p" style="left:1148.5px;top:262.4px;letter-spacing:-0.493px">PTB22/SPI2_SOUT/...</div>
<div style="left:1136px;top:278px;width:11px;height:3px;background:#dcdcdc;"></div>
<div class="p" style="left:1148.5px;top:274.4px;letter-spacing:-0.484px">PTB21/SPI2_SCK/...</div>
<div style="left:1136px;top:290px;width:11px;height:3px;background:#dcdcdc;"></div>
<div class="p" style="left:1148.5px;top:286.4px;letter-spacing:-0.485px">PTB20/SPI2_PCS0/...</div>
<div style="left:1136px;top:302px;width:11px;height:3px;background:#dcdcdc;"></div>
<div class="p" style="left:1148.5px;top:298.4px;letter-spacing:-0.505px">PTB19/CAN0_RX/...</div>
<div style="left:1136px;top:315px;width:11px;height:3px;background:#dcdcdc;"></div>
<div class="p" style="left:1148.5px;top:311.4px;letter-spacing:-0.498px">PTB18/CAN0_TX/...</div>
<div style="left:1136px;top:327px;width:11px;height:3px;background:#dcdcdc;"></div>
<div class="p" style="left:1148.5px;top:323.4px;letter-spacing:-0.463px">PTB17/SPI1_SIN/...</div>
<div style="left:1136px;top:339px;width:11px;height:3px;background:#dcdcdc;"></div>
<div class="p" style="left:1148.5px;top:335.4px;letter-spacing:-0.493px">PTB16/SPI1_SOUT/...</div>
<div style="left:1136px;top:351px;width:11px;height:3px;background:#c8c8c8;"></div>
<div class="p" style="left:1148.5px;top:347.4px;letter-spacing:-0.651px">VDD110</div>
<div style="left:1136px;top:363px;width:11px;height:3px;background:#c8c8c8;"></div>
<div class="p" style="left:1148.5px;top:359.4px;letter-spacing:-0.644px">VSS109</div>
<div style="left:1136px;top:375px;width:11px;height:3px;background:#dcdcdc;"></div>
<div class="p" style="left:1148.5px;top:371.4px;letter-spacing:-0.498px">ADC1_SE15/PTB11/...</div>
<div style="left:1136px;top:388px;width:11px;height:3px;background:#dcdcdc;"></div>
<div class="p" style="left:1148.5px;top:384.4px;letter-spacing:-0.501px">ADC1_SE14/PTB10/...</div>
<div style="left:1136px;top:400px;width:11px;height:3px;background:#00ff00;"></div>
<div class="p" style="left:1148.5px;top:396.4px;letter-spacing:-0.723px">PTB9</div>
<div style="left:1136px;top:412px;width:11px;height:3px;background:#dcdcdc;"></div>
<div class="p" style="left:1148.5px;top:408.4px;letter-spacing:-0.501px">ADC0_SE13/PTB3/...</div>
<div style="left:1136px;top:424px;width:11px;height:3px;background:#dcdcdc;"></div>
<div class="p" style="left:1148.5px;top:420.4px;letter-spacing:-0.501px">ADC0_SE12/PTB2/...</div>
<div style="left:1136px;top:436px;width:11px;height:3px;background:#00ff00;"></div>
<div class="p" style="left:1148.5px;top:432.4px;letter-spacing:-0.609px">RMII0_MDC</div>
<div style="left:1136px;top:449px;width:11px;height:3px;background:#00ff00;"></div>
<div class="p" style="left:1148.5px;top:445.4px;letter-spacing:-0.574px">RMII0_MDIO</div>
<div style="left:1136px;top:461px;width:11px;height:3px;background:#c8c8c8;"></div>
<div class="p" style="left:1148.5px;top:457.4px;letter-spacing:-0.653px">RESET_b</div>
<div style="left:1136px;top:473px;width:11px;height:3px;background:#dcdcdc;"></div>
<div class="p" style="left:1148.5px;top:469.4px;letter-spacing:-0.467px">XTAL0/PTA19/...</div>
<div style="left:802px;top:126px;width:3px;height:11px;background:#00ff00;"></div>
<div class="p" style="left:798.4px;top:124.5px;transform-origin:0 0;transform:rotate(-90deg) translate(0,0);letter-spacing:-0.749px">UART0_TX</div>
<div style="left:814px;top:126px;width:3px;height:11px;background:#00ff00;"></div>
<div class="p" style="left:810.4px;top:124.5px;transform-origin:0 0;transform:rotate(-90deg) translate(0,0);letter-spacing:-0.651px">UART0_RX</div>
<div style="left:826px;top:126px;width:3px;height:11px;background:#dcdcdc;"></div>
<div class="p" style="left:822.4px;top:124.5px;transform-origin:0 0;transform:rotate(-90deg) translate(0,0);letter-spacing:-0.391px">ADC0_SE6b/PTD5/...</div>
<div style="left:838px;top:126px;width:3px;height:11px;background:#00ff00;"></div>
<div class="p" style="left:834.4px;top:124.5px;transform-origin:0 0;transform:rotate(-90deg) translate(0,0);letter-spacing:-0.69px">UART0_RTS_b</div>
<div style="left:850px;top:126px;width:3px;height:11px;background:#dcdcdc;"></div>
<div class="p" style="left:846.4px;top:124.5px;transform-origin:0 0;transform:rotate(-90deg) translate(0,0);letter-spacing:-0.285px">PTD3/SPI0_SIN/...</div>
<div style="left:862px;top:126px;width:3px;height:11px;background:#00ff00;"></div>
<div class="p" style="left:858.4px;top:124.5px;transform-origin:0 0;transform:rotate(-90deg) translate(0,0);letter-spacing:-0.69px">SPI0_SOUT</div>
<div style="left:875px;top:126px;width:3px;height:11px;background:#00ff00;"></div>
<div class="p" style="left:871.4px;top:124.5px;transform-origin:0 0;transform:rotate(-90deg) translate(0,0);letter-spacing:-0.515px">SPI0_SCK</div>
<div style="left:887px;top:126px;width:3px;height:11px;background:#00ff00;"></div>
<div class="p" style="left:883.4px;top:124.5px;transform-origin:0 0;transform:rotate(-90deg) translate(0,0);letter-spacing:-0.646px">SPI0_PCS0</div>
<div style="left:899px;top:126px;width:3px;height:11px;background:#00ff00;"></div>
<div class="p" style="left:895.4px;top:124.5px;transform-origin:0 0;transform:rotate(-90deg) translate(0,0);letter-spacing:-0.95px">PTC18</div>
<div style="left:911px;top:126px;width:3px;height:11px;background:#dcdcdc;"></div>
<div class="p" style="left:907.4px;top:124.5px;transform-origin:0 0;transform:rotate(-90deg) translate(0,0);letter-spacing:-0.485px">PTC17/UART3_TX/...</div>
<div style="left:923px;top:126px;width:3px;height:11px;background:#dcdcdc;"></div>
<div class="p" style="left:919.4px;top:124.5px;transform-origin:0 0;transform:rotate(-90deg) translate(0,0);letter-spacing:-0.445px">PTC16/UART3_RX/...</div>
<div style="left:936px;top:126px;width:3px;height:11px;background:#c8c8c8;"></div>
<div class="p" style="left:932.4px;top:124.5px;transform-origin:0 0;transform:rotate(-90deg) translate(0,0);letter-spacing:-0.599px">VDD140</div>
<div style="left:948px;top:126px;width:3px;height:11px;background:#c8c8c8;"></div>
<div class="p" style="left:944.4px;top:124.5px;transform-origin:0 0;transform:rotate(-90deg) translate(0,0);letter-spacing:-0.899px">VSS139</div>
<div style="left:960px;top:126px;width:3px;height:11px;background:#dcdcdc;"></div>
<div class="p" style="left:956.4px;top:124.5px;transform-origin:0 0;transform:rotate(-90deg) translate(0,0);letter-spacing:-0.544px">PTC15/UART4_TX/...</div>
<div style="left:972px;top:126px;width:3px;height:11px;background:#dcdcdc;"></div>
<div class="p" style="left:968.4px;top:124.5px;transform-origin:0 0;transform:rotate(-90deg) translate(0,0);letter-spacing:-0.463px">PTC14/UART4_RX/...</div>
<div style="left:984px;top:126px;width:3px;height:11px;background:#dcdcdc;"></div>
<div class="p" style="left:980.4px;top:124.5px;transform-origin:0 0;transform:rotate(-90deg) translate(0,0);letter-spacing:-0.317px">PTC13/...</div>
<div style="left:996px;top:126px;width:3px;height:11px;background:#dcdcdc;"></div>
<div class="p" style="left:992.4px;top:124.5px;transform-origin:0 0;transform:rotate(-90deg) translate(0,0);letter-spacing:-0.317px">PTC12/...</div>
<div style="left:1009px;top:126px;width:3px;height:11px;background:#00ff00;"></div>
<div class="p" style="left:1005.4px;top:124.5px;transform-origin:0 0;transform:rotate(-90deg) translate(0,0);letter-spacing:-0.464px">I2C1_SDA</div>
<div style="left:1021px;top:126px;width:3px;height:11px;background:#00ff00;"></div>
<div class="p" style="left:1017.4px;top:124.5px;transform-origin:0 0;transform:rotate(-90deg) translate(0,0);letter-spacing:-0.377px">I2C1_SCL</div>
<div style="left:1033px;top:126px;width:3px;height:11px;background:#dcdcdc;"></div>
<div class="p" style="left:1029.4px;top:124.5px;transform-origin:0 0;transform:rotate(-90deg) translate(0,0);letter-spacing:-0.334px">ADC1_SE5b/...</div>
<div style="left:1045px;top:126px;width:3px;height:11px;background:#dcdcdc;"></div>
<div class="p" style="left:1041.4px;top:124.5px;transform-origin:0 0;transform:rotate(-90deg) translate(0,0);letter-spacing:-0.334px">ADC1_SE4b/...</div>
<div style="left:1057px;top:126px;width:3px;height:11px;background:#dcdcdc;"></div>
<div class="p" style="left:1053.4px;top:124.5px;transform-origin:0 0;transform:rotate(-90deg) translate(0,0);letter-spacing:-0.391px">CMP0_IN1/PTC7/...</div>
<div style="left:1070px;top:126px;width:3px;height:11px;background:#dcdcdc;"></div>
<div class="p" style="left:1066.4px;top:124.5px;transform-origin:0 0;transform:rotate(-90deg) translate(0,0);letter-spacing:-0.391px">CMP0_IN0/PTC6/...</div>
<div style="left:1082px;top:126px;width:3px;height:11px;background:#dcdcdc;"></div>
<div class="p" style="left:1078.4px;top:124.5px;transform-origin:0 0;transform:rotate(-90deg) translate(0,0);letter-spacing:-0.346px">PTC5/LLWU_P9/...</div>
<div style="left:1094px;top:126px;width:3px;height:11px;background:#dcdcdc;"></div>
<div class="p" style="left:1090.4px;top:124.5px;transform-origin:0 0;transform:rotate(-90deg) translate(0,0);letter-spacing:-0.346px">PTC4/LLWU_P8/...</div>
<div style="left:802px;top:515px;width:3px;height:10px;background:#c8c8c8;"></div>
<div style="left:814px;top:515px;width:3px;height:10px;background:#c8c8c8;"></div>
<div style="left:824px;top:513px;width:7px;height:12px;background:#0000ff;"></div>
<div style="left:826px;top:515px;width:3px;height:10px;background:#00ff00;"></div>
<div style="left:836px;top:513px;width:7px;height:12px;background:#0000ff;"></div>
<div style="left:838px;top:515px;width:3px;height:10px;background:#00ff00;"></div>
<div style="left:848px;top:513px;width:7px;height:12px;background:#0000ff;"></div>
<div style="left:850px;top:515px;width:3px;height:10px;background:#00ff00;"></div>
<div style="left:862px;top:515px;width:3px;height:10px;background:#dcdcdc;"></div>
<div style="left:875px;top:515px;width:3px;height:10px;background:#dcdcdc;"></div>
<div style="left:885px;top:513px;width:7px;height:12px;background:#ffff00;"></div>
<div style="left:887px;top:515px;width:3px;height:10px;background:#dcdce4;"></div>
<div style="left:899px;top:515px;width:3px;height:10px;background:#dcdcdc;"></div>
<div style="left:911px;top:515px;width:3px;height:10px;background:#dcdcdc;"></div>
<div style="left:923px;top:515px;width:3px;height:10px;background:#dcdcdc;"></div>
<div style="left:936px;top:515px;width:3px;height:10px;background:#dcdcdc;"></div>
<div style="left:948px;top:515px;width:3px;height:10px;background:#dcdcdc;"></div>
<div style="left:960px;top:515px;width:3px;height:10px;background:#00ff00;"></div>
<div style="left:972px;top:515px;width:3px;height:10px;background:#c8c8c8;"></div>
<div style="left:984px;top:515px;width:3px;height:10px;background:#c8c8c8;"></div>
<div style="left:996px;top:515px;width:3px;height:10px;background:#00ff00;"></div>
<div style="left:1009px;top:515px;width:3px;height:10px;background:#00ff00;"></div>
<div style="left:1021px;top:515px;width:3px;height:10px;background:#00ff00;"></div>
<div style="left:1033px;top:515px;width:3px;height:10px;background:#00ff00;"></div>
<div style="left:1045px;top:515px;width:3px;height:10px;background:#00ff00;"></div>
<div style="left:1057px;top:515px;width:3px;height:10px;background:#00ff00;"></div>
<div style="left:1070px;top:515px;width:3px;height:10px;background:#c8c8c8;"></div>
<div style="left:1082px;top:515px;width:3px;height:10px;background:#c8c8c8;"></div>
<div style="left:1094px;top:515px;width:3px;height:10px;background:#dcdcdc;"></div>
<div style="left:791px;top:164px;width:103px;height:16px;background:#b8b8b8;border:1px solid #fff;"></div>
<div style="left:794px;top:167px;width:9px;height:9px;background:#dedede;"></div>
<div class="p" style="left:807px;top:164.9px;letter-spacing:-0.601px">ADC0</div>
<div style="left:791px;top:181px;width:103px;height:16px;background:#b8b8b8;border:1px solid #fff;"></div>
<div style="left:794px;top:184px;width:9px;height:9px;background:#dedede;"></div>
<div class="p" style="left:807px;top:181.9px;letter-spacing:-0.627px">CMP0</div>
<div style="left:791px;top:198px;width:103px;height:16px;background:#b8b8b8;border:1px solid #fff;"></div>
<div style="left:794px;top:201px;width:9px;height:9px;background:#dedede;"></div>
<div class="p" style="left:807px;top:198.9px;letter-spacing:-0.727px">CMT</div>
<div style="left:791px;top:215px;width:103px;height:16px;background:#b8b8b8;border:1px solid #fff;"></div>
<div style="left:794px;top:218px;width:9px;height:9px;background:#00ff00;"></div>
<div class="p" style="left:807px;top:215.9px;letter-spacing:-0.601px">ENET</div>
<div style="left:791px;top:232px;width:103px;height:16px;background:#b8b8b8;border:1px solid #fff;"></div>
<div style="left:794px;top:235px;width:9px;height:9px;background:#dedede;"></div>
<div class="p" style="left:807px;top:232.9px;letter-spacing:-0.831px">FB</div>
<div style="left:791px;top:249px;width:103px;height:16px;background:#b8b8b8;border:1px solid #fff;"></div>
<div style="left:794px;top:252px;width:9px;height:9px;background:#dedede;"></div>
<div class="p" style="left:807px;top:249.9px;letter-spacing:-0.588px">FTM2</div>
<div style="left:791px;top:266px;width:103px;height:16px;background:#b8b8b8;border:1px solid #fff;"></div>
<div style="left:794px;top:269px;width:9px;height:9px;background:#00ff00;"></div>
<div class="p" style="left:807px;top:266.9px;letter-spacing:-0.539px">GPIOB</div>
<div style="left:791px;top:283px;width:103px;height:16px;background:#b8b8b8;border:1px solid #fff;"></div>
<div style="left:794px;top:286px;width:9px;height:9px;background:#00ff00;"></div>
<div class="p" style="left:807px;top:283.9px;letter-spacing:-0.539px">GPIOE</div>
<div style="left:791px;top:300px;width:103px;height:16px;background:#b8b8b8;border:1px solid #fff;"></div>
<div style="left:794px;top:303px;width:9px;height:9px;background:#dedede;"></div>
<div class="p" style="left:807px;top:300.9px;letter-spacing:-0.472px">I2C2</div>
<div style="left:791px;top:317px;width:103px;height:16px;background:#b8b8b8;border:1px solid #fff;"></div>
<div style="left:794px;top:320px;width:9px;height:9px;background:#dedede;"></div>
<div class="p" style="left:807px;top:317.9px;letter-spacing:-0.61px">LLWU</div>
<div style="left:791px;top:334px;width:103px;height:16px;background:#b8b8b8;border:1px solid #fff;"></div>
<div style="left:794px;top:337px;width:9px;height:9px;background:#dedede;"></div>
<div class="p" style="left:807px;top:334.9px;letter-spacing:-0.589px">PDB0</div>
<div style="left:791px;top:351px;width:103px;height:16px;background:#b8b8b8;border:1px solid #fff;"></div>
<div style="left:794px;top:354px;width:9px;height:9px;background:#00ff00;"></div>
<div class="p" style="left:807px;top:351.9px;letter-spacing:-0.64px">SDHC</div>
<div style="left:791px;top:368px;width:103px;height:16px;background:#b8b8b8;border:1px solid #fff;"></div>
<div style="left:794px;top:371px;width:9px;height:9px;background:#dedede;"></div>
<div class="p" style="left:807px;top:368.9px;letter-spacing:-0.485px">SPI1</div>
<div style="left:791px;top:385px;width:103px;height:16px;background:#b8b8b8;border:1px solid #fff;"></div>
<div style="left:794px;top:388px;width:9px;height:9px;background:#dedede;"></div>
<div class="p" style="left:807px;top:385.9px;letter-spacing:-0.162px">SystemControl</div>
<div style="left:791px;top:402px;width:103px;height:16px;background:#b8b8b8;border:1px solid #fff;"></div>
<div style="left:794px;top:405px;width:9px;height:9px;background:#dedede;"></div>
<div class="p" style="left:807px;top:402.9px;letter-spacing:-0.555px">UART1</div>
<div style="left:791px;top:419px;width:103px;height:16px;background:#b8b8b8;border:1px solid #fff;"></div>
<div style="left:794px;top:422px;width:9px;height:9px;background:#dedede;"></div>
<div class="p" style="left:807px;top:419.9px;letter-spacing:-0.555px">UART4</div>
<div style="left:791px;top:436px;width:103px;height:16px;background:#b8b8b8;border:1px solid #fff;"></div>
<div style="left:794px;top:439px;width:9px;height:9px;background:#c6c6c6;"></div>
<div class="p" style="left:807px;top:436.9px;letter-spacing:-0.601px">VREF</div>
<div style="left:895px;top:164px;width:103px;height:16px;background:#b8b8b8;border:1px solid #fff;"></div>
<div style="left:898px;top:167px;width:9px;height:9px;background:#dedede;"></div>
<div class="p" style="left:911px;top:164.9px;letter-spacing:-0.601px">ADC1</div>
<div style="left:895px;top:181px;width:103px;height:16px;background:#b8b8b8;border:1px solid #fff;"></div>
<div style="left:898px;top:184px;width:9px;height:9px;background:#dedede;"></div>
<div class="p" style="left:911px;top:181.9px;letter-spacing:-0.627px">CMP1</div>
<div style="left:895px;top:198px;width:103px;height:16px;background:#b8b8b8;border:1px solid #fff;"></div>
<div style="left:898px;top:201px;width:9px;height:9px;background:#c6c6c6;"></div>
<div class="p" style="left:911px;top:198.9px;letter-spacing:-0.601px">DAC0</div>
<div style="left:895px;top:215px;width:103px;height:16px;background:#b8b8b8;border:1px solid #fff;"></div>
<div style="left:898px;top:218px;width:9px;height:9px;background:#dedede;"></div>
<div class="p" style="left:911px;top:215.9px;letter-spacing:-0.824px">EWM</div>
<div style="left:895px;top:232px;width:103px;height:16px;background:#b8b8b8;border:1px solid #fff;"></div>
<div style="left:898px;top:235px;width:9px;height:9px;background:#dedede;"></div>
<div class="p" style="left:911px;top:232.9px;letter-spacing:-0.588px">FTM0</div>
<div style="left:895px;top:249px;width:103px;height:16px;background:#b8b8b8;border:1px solid #fff;"></div>
<div style="left:898px;top:252px;width:9px;height:9px;background:#dedede;"></div>
<div class="p" style="left:911px;top:249.9px;letter-spacing:-0.588px">FTM3</div>
<div style="left:895px;top:266px;width:103px;height:16px;background:#b8b8b8;border:1px solid #fff;"></div>
<div style="left:898px;top:269px;width:9px;height:9px;background:#00ff00;"></div>
<div class="p" style="left:911px;top:266.9px;letter-spacing:-0.548px">GPIOC</div>
<div style="left:895px;top:283px;width:103px;height:16px;background:#b8b8b8;border:1px solid #fff;"></div>
<div style="left:898px;top:286px;width:9px;height:9px;background:#dedede;"></div>
<div class="p" style="left:911px;top:283.9px;letter-spacing:-0.472px">I2C0</div>
<div style="left:895px;top:300px;width:103px;height:16px;background:#b8b8b8;border:1px solid #fff;"></div>
<div style="left:898px;top:303px;width:9px;height:9px;background:#dedede;"></div>
<div class="p" style="left:911px;top:300.9px;letter-spacing:-0.459px">I2S0</div>
<div style="left:895px;top:317px;width:103px;height:16px;background:#b8b8b8;border:1px solid #fff;"></div>
<div style="left:898px;top:320px;width:9px;height:9px;background:#dedede;"></div>
<div class="p" style="left:911px;top:317.9px;letter-spacing:-0.54px">LPTMR0</div>
<div style="left:895px;top:334px;width:103px;height:16px;background:#b8b8b8;border:1px solid #fff;"></div>
<div style="left:898px;top:337px;width:9px;height:9px;background:#c6c6c6;"></div>
<div class="p" style="left:911px;top:334.9px;letter-spacing:-0.766px">RCM</div>
<div style="left:895px;top:351px;width:103px;height:16px;background:#b8b8b8;border:1px solid #fff;"></div>
<div style="left:898px;top:354px;width:9px;height:9px;background:#dedede;"></div>
<div class="p" style="left:911px;top:351.9px;letter-spacing:-0.591px">SIM</div>
<div style="left:895px;top:368px;width:103px;height:16px;background:#b8b8b8;border:1px solid #fff;"></div>
<div style="left:898px;top:371px;width:9px;height:9px;background:#dedede;"></div>
<div class="p" style="left:911px;top:368.9px;letter-spacing:-0.485px">SPI2</div>
<div style="left:895px;top:385px;width:103px;height:16px;background:#b8b8b8;border:1px solid #fff;"></div>
<div style="left:898px;top:388px;width:9px;height:9px;background:#dedede;"></div>
<div class="p" style="left:911px;top:385.9px;letter-spacing:-0.51px">TPIU</div>
<div style="left:895px;top:402px;width:103px;height:16px;background:#b8b8b8;border:1px solid #fff;"></div>
<div style="left:898px;top:405px;width:9px;height:9px;background:#dedede;"></div>
<div class="p" style="left:911px;top:402.9px;letter-spacing:-0.555px">UART2</div>
<div style="left:895px;top:419px;width:103px;height:16px;background:#b8b8b8;border:1px solid #fff;"></div>
<div style="left:898px;top:422px;width:9px;height:9px;background:#dedede;"></div>
<div class="p" style="left:911px;top:419.9px;letter-spacing:-0.589px">USB0</div>
<div style="left:999px;top:164px;width:103px;height:16px;background:#b8b8b8;border:1px solid #fff;"></div>
<div style="left:1002px;top:167px;width:9px;height:9px;background:#dedede;"></div>
<div class="p" style="left:1015px;top:164.9px;letter-spacing:-0.601px">CAN0</div>
<div style="left:999px;top:181px;width:103px;height:16px;background:#b8b8b8;border:1px solid #fff;"></div>
<div style="left:1002px;top:184px;width:9px;height:9px;background:#dedede;"></div>
<div class="p" style="left:1015px;top:181.9px;letter-spacing:-0.627px">CMP2</div>
<div style="left:999px;top:198px;width:103px;height:16px;background:#b8b8b8;border:1px solid #fff;"></div>
<div style="left:1002px;top:201px;width:9px;height:9px;background:#dedede;"></div>
<div class="p" style="left:1015px;top:198.9px;letter-spacing:-0.746px">DMA</div>
<div style="left:999px;top:215px;width:103px;height:16px;background:#b8b8b8;border:1px solid #fff;"></div>
<div style="left:1002px;top:218px;width:9px;height:9px;background:#dedede;"></div>
<div class="p" style="left:1015px;top:215.9px;letter-spacing:-0.175px">EzPort</div>
<div style="left:999px;top:232px;width:103px;height:16px;background:#b8b8b8;border:1px solid #fff;"></div>
<div style="left:1002px;top:235px;width:9px;height:9px;background:#dedede;"></div>
<div class="p" style="left:1015px;top:232.9px;letter-spacing:-0.588px">FTM1</div>
<div style="left:999px;top:249px;width:103px;height:16px;background:#b8b8b8;border:1px solid #fff;"></div>
<div style="left:1002px;top:252px;width:9px;height:9px;background:#dedede;"></div>
<div class="p" style="left:1015px;top:249.9px;letter-spacing:-0.539px">GPIOA</div>
<div style="left:999px;top:266px;width:103px;height:16px;background:#b8b8b8;border:1px solid #fff;"></div>
<div style="left:1002px;top:269px;width:9px;height:9px;background:#dedede;"></div>
<div class="p" style="left:1015px;top:266.9px;letter-spacing:-0.548px">GPIOD</div>
<div style="left:999px;top:283px;width:103px;height:16px;background:#b8b8b8;border:1px solid #fff;"></div>
<div style="left:1002px;top:286px;width:9px;height:9px;background:#00ff00;"></div>
<div class="p" style="left:1015px;top:283.9px;letter-spacing:-0.472px">I2C1</div>
<div style="left:999px;top:300px;width:103px;height:16px;background:#b8b8b8;border:1px solid #fff;"></div>
<div style="left:1002px;top:303px;width:9px;height:9px;background:#dedede;"></div>
<div class="p" style="left:1015px;top:300.9px;letter-spacing:-0.558px">JTAG</div>
<div style="left:999px;top:317px;width:103px;height:16px;background:#b8b8b8;border:1px solid #fff;"></div>
<div style="left:1002px;top:320px;width:9px;height:9px;background:#dedede;"></div>
<div class="p" style="left:1015px;top:317.9px;letter-spacing:-0.727px">OSC</div>
<div style="left:999px;top:334px;width:103px;height:16px;background:#b8b8b8;border:2px solid #0000ff;"></div>
<div style="left:1002px;top:337px;width:9px;height:9px;background:#00ff00;"></div>
<div class="p" style="left:1015px;top:334.9px;letter-spacing:-0.681px">RTC</div>
<div style="left:999px;top:351px;width:103px;height:16px;background:#b8b8b8;border:1px solid #fff;"></div>
<div style="left:1002px;top:354px;width:9px;height:9px;background:#00ff00;"></div>
<div class="p" style="left:1015px;top:351.9px;letter-spacing:-0.485px">SPI0</div>
<div style="left:999px;top:368px;width:103px;height:16px;background:#b8b8b8;border:1px solid #fff;"></div>
<div style="left:1002px;top:371px;width:9px;height:9px;background:#c6c6c6;"></div>
<div class="p" style="left:1015px;top:368.9px;letter-spacing:-0.53px">SUPPLY</div>
<div style="left:999px;top:385px;width:103px;height:16px;background:#b8b8b8;border:1px solid #fff;"></div>
<div style="left:1002px;top:388px;width:9px;height:9px;background:#00ff00;"></div>
<div class="p" style="left:1015px;top:385.9px;letter-spacing:-0.555px">UART0</div>
<div style="left:999px;top:402px;width:103px;height:16px;background:#b8b8b8;border:1px solid #fff;"></div>
<div style="left:1002px;top:405px;width:9px;height:9px;background:#dedede;"></div>
<div class="p" style="left:1015px;top:402.9px;letter-spacing:-0.555px">UART3</div>
<div style="left:999px;top:419px;width:103px;height:16px;background:#b8b8b8;border:1px solid #fff;"></div>
<div style="left:1002px;top:422px;width:9px;height:9px;background:#c6c6c6;"></div>
<div class="p" style="left:1015px;top:419.9px;letter-spacing:-0.579px">USBDCD</div>
<div class="t" style="left:803.3px;top:481px;line-height:20px;height:20px;font-size:16px;color:#303030;">MK64FX512VLL12 - LQFP 100 package</div>
<div style="left:0px;top:532px;width:1273px;height:1px;background:#dcdcdc;"></div>
<div style="left:110px;top:557px;width:1163px;height:1px;background:#dcdcdc;"></div>
<div style="left:110px;top:533px;width:1px;height:25px;background:#dcdcdc;"></div>
<div style="left:1271px;top:532px;width:1px;height:187px;background:#dcdcdc;"></div>
<div class="t" style="left:24px;top:537px;line-height:18px;height:18px;letter-spacing:-0.1px;">Routing Details</div>
<svg style="left:0px;top:535px" width="23" height="21" viewBox="0 0 23 21" fill="none" stroke="#24967a"><rect x="6.9" y="3.9" width="10.2" height="14.2" stroke-width="1.8"/><path d="M4 8H6.5M4 14H6.5M17.5 8H20.2M17.5 11H20.2M17.5 14H20.2" stroke-width="1.9"/><path d="M7.5 14H16.5" stroke-width="1.6"/><path d="M7.5 7.6C10 8 11.5 11 16.5 11" stroke-width="1.4"/></svg>
<div style="left:1228px;top:540px;width:10px;height:4px;background:#fff;border:1px solid #5c5c5c;"></div>
<div style="left:1251px;top:540px;width:10px;height:10px;background:#fff;border:1px solid #5c5c5c;"></div>
<div style="left:1251px;top:542px;width:10px;height:1px;background:#5c5c5c;"></div>
<div style="left:8px;top:565px;width:32px;height:23px;background:#cce4f7;border:1px solid #00559b;"></div>
<div class="t" style="left:13px;top:567px;line-height:21px;height:21px;letter-spacing:-0.35px;">Pins</div>
<div style="left:47px;top:565px;width:47px;height:23px;background:#cce4f7;border:1px solid #00559b;"></div>
<div class="t" style="left:52px;top:567px;line-height:21px;height:21px;letter-spacing:-0.276px;">Signals</div>
<div style="left:100px;top:564px;width:1164px;height:25px;background:#fff;border:1px solid #7a7a7a;"></div>
<svg style="left:104px;top:569.5px" width="12" height="13" viewBox="0 0 12 13" fill="none" stroke="#6a6a6a" stroke-width="1.6"><circle cx="8.1" cy="5" r="3.1"/><path d="M5.6 7.6L1.2 12" stroke-width="1.6"/></svg>
<div class="t" style="left:119px;top:566px;line-height:18px;height:18px;color:#6d6d6d;letter-spacing:0.15px;">type filter text</div>
<div style="left:7px;top:592px;width:1257px;height:127px;background:#fff;border:1px solid #a0a0a0;border-bottom:none;"></div>
<div style="left:14px;top:599px;width:1243px;height:26px;background:#b9d1ea;"></div>
<div style="left:1256px;top:625px;width:1px;height:94px;background:#b9d1ea;"></div>
<div style="left:14px;top:625px;width:1px;height:94px;background:#b9d1ea;"></div>
<div class="t" style="left:18px;top:601px;line-height:20px;height:20px;letter-spacing:-0.2px;">Routing Details for BOARD_InitPins</div>
<div style="left:228px;top:601px;width:37px;height:22px;background:#fff;border:1px solid #7a7a7a;"></div>
<div class="t" style="left:228px;top:602px;line-height:20px;height:20px;width:37px;overflow:hidden;text-align:center;">29</div>
<div style="left:270px;top:601px;width:22px;height:22px;background:#b9d1ea;border:1px solid #e9eaec;"></div>
<div style="left:271px;top:602px;width:20px;height:20px;border:1px solid #a3a3a3;"></div>
<svg style="left:270px;top:601px" width="22" height="22" viewBox="0 0 22 22"><circle cx="11" cy="11" r="8" fill="#24967a"/><path d="M11 6.8V15.2M6.8 11H15.2" stroke="#fff" stroke-width="2.2"/></svg>
<div style="left:297px;top:601px;width:22px;height:22px;background:#b9d1ea;border:1px solid #e9eaec;"></div>
<div style="left:298px;top:602px;width:20px;height:20px;border:1px solid #a3a3a3;"></div>
<svg style="left:297px;top:601px" width="22" height="22" viewBox="0 0 22 22"><circle cx="11.1" cy="11" r="8" fill="#24967a"/><path d="M7.6 7.5L14.6 14.5M14.6 7.5L7.6 14.5" stroke="#fff" stroke-width="2.2"/></svg>
<div style="left:324px;top:601px;width:22px;height:22px;background:#b9d1ea;border:1px solid #e9eaec;"></div>
<div style="left:325px;top:602px;width:20px;height:20px;border:1px solid #a3a3a3;"></div>
<svg style="left:324px;top:601px" width="22" height="22" viewBox="0 0 22 22"><path d="M5.8 13.6L11 8.6L16.2 13.6" fill="none" stroke="#24967a" stroke-width="2.5"/></svg>
<div style="left:351px;top:601px;width:22px;height:22px;background:#b9d1ea;border:1px solid #e9eaec;"></div>
<div style="left:352px;top:602px;width:20px;height:20px;border:1px solid #a3a3a3;"></div>
<svg style="left:351px;top:601px" width="22" height="22" viewBox="0 0 22 22"><path d="M5.8 8.9L11 13.9L16.2 8.9" fill="none" stroke="#24967a" stroke-width="2.5"/></svg>
<div class="t" style="left:22px;top:627px;line-height:20px;height:20px;width:36px;overflow:hidden;">#</div>
<div class="t" style="left:62px;top:627px;line-height:20px;height:20px;letter-spacing:-0.15px;width:74px;overflow:hidden;">Peripheral</div>
<div class="t" style="left:142px;top:627px;line-height:20px;height:20px;width:78px;overflow:hidden;">Signal</div>
<div class="t" style="left:226px;top:627px;line-height:20px;height:20px;width:40px;overflow:hidden;">Arrow</div>
<div class="t" style="left:272px;top:627px;line-height:20px;height:20px;letter-spacing:0.12px;width:107px;overflow:hidden;">Routed pin/signal</div>
<div class="t" style="left:385px;top:627px;line-height:20px;height:20px;width:100px;overflow:hidden;">Label</div>
<div class="t" style="left:491px;top:627px;line-height:20px;height:20px;width:100px;overflow:hidden;">Identifier</div>
<div class="t" style="left:597px;top:627px;line-height:20px;height:20px;width:79px;overflow:hidden;">Direction</div>
<div class="t" style="left:682px;top:627px;line-height:20px;height:20px;letter-spacing:-0.15px;width:95px;overflow:hidden;">GPIO initial state</div>
<div class="t" style="left:783px;top:627px;line-height:20px;height:20px;width:84px;overflow:hidden;">GPIO interrupt</div>
<div class="t" style="left:873px;top:627px;line-height:20px;height:20px;letter-spacing:-0.25px;width:74px;overflow:hidden;">Slew rate</div>
<div class="t" style="left:953px;top:627px;line-height:20px;height:20px;letter-spacing:-0.07px;width:74px;overflow:hidden;">Open drain</div>
<div class="t" style="left:1033px;top:627px;line-height:20px;height:20px;letter-spacing:-0.07px;width:82px;overflow:hidden;">Drive strength</div>
<div class="t" style="left:1121px;top:627px;line-height:20px;height:20px;letter-spacing:-0.12px;width:74px;overflow:hidden;">Pull select</div>
<div class="t" style="left:1201px;top:627px;line-height:20px;height:20px;width:37px;overflow:hidden;">Pull en</div>
<div style="left:55px;top:625px;width:1px;height:24px;background:#e5e5e5;"></div>
<div style="left:56px;top:649px;width:1px;height:70px;background:#ededed;"></div>
<div style="left:135px;top:625px;width:1px;height:24px;background:#e5e5e5;"></div>
<div style="left:136px;top:649px;width:1px;height:70px;background:#ededed;"></div>
<div style="left:219px;top:625px;width:1px;height:24px;background:#e5e5e5;"></div>
<div style="left:220px;top:649px;width:1px;height:70px;background:#ededed;"></div>
<div style="left:265px;top:625px;width:1px;height:24px;background:#e5e5e5;"></div>
<div style="left:266px;top:649px;width:1px;height:70px;background:#ededed;"></div>
<div style="left:378px;top:625px;width:1px;height:24px;background:#e5e5e5;"></div>
<div style="left:379px;top:649px;width:1px;height:70px;background:#ededed;"></div>
<div style="left:484px;top:625px;width:1px;height:24px;background:#e5e5e5;"></div>
<div style="left:485px;top:649px;width:1px;height:70px;background:#ededed;"></div>
<div style="left:590px;top:625px;width:1px;height:24px;background:#e5e5e5;"></div>
<div style="left:591px;top:649px;width:1px;height:70px;background:#ededed;"></div>
<div style="left:675px;top:625px;width:1px;height:24px;background:#e5e5e5;"></div>
<div style="left:676px;top:649px;width:1px;height:70px;background:#ededed;"></div>
<div style="left:776px;top:625px;width:1px;height:24px;background:#e5e5e5;"></div>
<div style="left:777px;top:649px;width:1px;height:70px;background:#ededed;"></div>
<div style="left:866px;top:625px;width:1px;height:24px;background:#e5e5e5;"></div>
<div style="left:867px;top:649px;width:1px;height:70px;background:#ededed;"></div>
<div style="left:946px;top:625px;width:1px;height:24px;background:#e5e5e5;"></div>
<div style="left:947px;top:649px;width:1px;height:70px;background:#ededed;"></div>
<div style="left:1026px;top:625px;width:1px;height:24px;background:#e5e5e5;"></div>
<div style="left:1027px;top:649px;width:1px;height:70px;background:#ededed;"></div>
<div style="left:1114px;top:625px;width:1px;height:24px;background:#e5e5e5;"></div>
<div style="left:1115px;top:649px;width:1px;height:70px;background:#ededed;"></div>
<div style="left:1194px;top:625px;width:1px;height:24px;background:#e5e5e5;"></div>
<div style="left:1195px;top:649px;width:1px;height:70px;background:#ededed;"></div>
<svg style="left:92.3px;top:625px" width="9" height="5" viewBox="0 0 9 5"><path d="M0.5 4.5L4.5 0.8L8.5 4.5" fill="none" stroke="#555" stroke-width="1"/></svg>
<div style="left:1238px;top:625px;width:18px;height:94px;background:#f0f0f0;"></div>
<svg style="left:1241px;top:631px" width="9" height="6" viewBox="0 0 9 6"><path d="M1 5L4.5 1.5L8 5" fill="none" stroke="#505050" stroke-width="1.8"/></svg>
<div style="left:15px;top:667px;width:1223px;height:1px;background:#f0f0f0;"></div>
<div style="left:57px;top:649px;width:1180px;height:18px;background:#ffff00;"></div>
<div style="left:136px;top:649px;width:1px;height:18px;background:#efefef;"></div>
<div style="left:220px;top:649px;width:1px;height:18px;background:#efefef;"></div>
<div style="left:266px;top:649px;width:1px;height:18px;background:#efefef;"></div>
<div style="left:379px;top:649px;width:1px;height:18px;background:#efefef;"></div>
<div style="left:485px;top:649px;width:1px;height:18px;background:#efefef;"></div>
<div style="left:591px;top:649px;width:1px;height:18px;background:#efefef;"></div>
<div style="left:676px;top:649px;width:1px;height:18px;background:#efefef;"></div>
<div style="left:777px;top:649px;width:1px;height:18px;background:#efefef;"></div>
<div style="left:867px;top:649px;width:1px;height:18px;background:#efefef;"></div>
<div style="left:947px;top:649px;width:1px;height:18px;background:#efefef;"></div>
<div style="left:1027px;top:649px;width:1px;height:18px;background:#efefef;"></div>
<div style="left:1115px;top:649px;width:1px;height:18px;background:#efefef;"></div>
<div style="left:1195px;top:649px;width:1px;height:18px;background:#efefef;"></div>
<div class="t" style="left:22px;top:650px;line-height:19px;height:19px;letter-spacing:-0.3px;">29</div>
<div class="t" style="left:62px;top:650px;line-height:19px;height:19px;letter-spacing:-0.95px;">RTC</div>
<div class="t" style="left:142px;top:650px;line-height:19px;height:19px;letter-spacing:-0.95px;">EXTAL32</div>
<div class="t" style="left:226px;top:650px;line-height:19px;height:19px;font-size:11px;color:#b4b4b4;letter-spacing:1.5px;">&lt;-</div>
<div class="t" style="left:272px;top:650px;line-height:19px;height:19px;letter-spacing:-0.574px;">[29] EXTAL32</div>
<div class="t" style="left:385px;top:650px;line-height:19px;height:19px;letter-spacing:-0.95px;">EXTAL</div>
<div class="t" style="left:491px;top:650px;line-height:19px;height:19px;letter-spacing:1.06px;width:100px;overflow:hidden;font-style:italic;">n/a</div>
<div class="t" style="left:597px;top:650px;line-height:19px;height:19px;letter-spacing:0.303px;width:79px;overflow:hidden;font-style:italic;">Input</div>
<div class="t" style="left:682px;top:650px;line-height:19px;height:19px;letter-spacing:1.06px;width:95px;overflow:hidden;font-style:italic;">n/a</div>
<div class="t" style="left:783px;top:650px;line-height:19px;height:19px;letter-spacing:1.06px;width:84px;overflow:hidden;font-style:italic;">n/a</div>
<div class="t" style="left:873px;top:650px;line-height:19px;height:19px;letter-spacing:1.06px;width:74px;overflow:hidden;font-style:italic;">n/a</div>
<div class="t" style="left:953px;top:650px;line-height:19px;height:19px;letter-spacing:1.06px;width:74px;overflow:hidden;font-style:italic;">n/a</div>
<div class="t" style="left:1033px;top:650px;line-height:19px;height:19px;letter-spacing:1.06px;width:82px;overflow:hidden;font-style:italic;">n/a</div>
<div class="t" style="left:1121px;top:650px;line-height:19px;height:19px;letter-spacing:1.06px;width:74px;overflow:hidden;font-style:italic;">n/a</div>
<div class="t" style="left:1201px;top:650px;line-height:19px;height:19px;letter-spacing:1.06px;width:37px;overflow:hidden;font-style:italic;">n/a</div>
<div style="left:15px;top:686px;width:1223px;height:1px;background:#f0f0f0;"></div>
<div style="left:57px;top:668px;width:1180px;height:18px;background:#ffff00;"></div>
<div style="left:136px;top:668px;width:1px;height:18px;background:#efefef;"></div>
<div style="left:220px;top:668px;width:1px;height:18px;background:#efefef;"></div>
<div style="left:266px;top:668px;width:1px;height:18px;background:#efefef;"></div>
<div style="left:379px;top:668px;width:1px;height:18px;background:#efefef;"></div>
<div style="left:485px;top:668px;width:1px;height:18px;background:#efefef;"></div>
<div style="left:591px;top:668px;width:1px;height:18px;background:#efefef;"></div>
<div style="left:676px;top:668px;width:1px;height:18px;background:#efefef;"></div>
<div style="left:777px;top:668px;width:1px;height:18px;background:#efefef;"></div>
<div style="left:867px;top:668px;width:1px;height:18px;background:#efefef;"></div>
<div style="left:947px;top:668px;width:1px;height:18px;background:#efefef;"></div>
<div style="left:1027px;top:668px;width:1px;height:18px;background:#efefef;"></div>
<div style="left:1115px;top:668px;width:1px;height:18px;background:#efefef;"></div>
<div style="left:1195px;top:668px;width:1px;height:18px;background:#efefef;"></div>
<div style="left:16px;top:668px;width:40px;height:18px;background:#0078d7;"></div>
<div class="t" style="left:22px;top:669px;line-height:19px;height:19px;letter-spacing:-0.3px;">28</div>
<div class="t" style="left:62px;top:669px;line-height:19px;height:19px;letter-spacing:-0.95px;">RTC</div>
<div class="t" style="left:142px;top:669px;line-height:19px;height:19px;letter-spacing:-0.813px;">XTAL32</div>
<div class="t" style="left:226px;top:669px;line-height:19px;height:19px;font-size:11px;color:#b4b4b4;letter-spacing:1.5px;">-&gt;</div>
<div class="t" style="left:272px;top:669px;line-height:19px;height:19px;letter-spacing:-0.451px;">[28] XTAL32</div>
<div class="t" style="left:385px;top:669px;line-height:19px;height:19px;letter-spacing:-0.94px;">XTAL</div>
<div class="t" style="left:491px;top:669px;line-height:19px;height:19px;letter-spacing:1.06px;width:100px;overflow:hidden;font-style:italic;">n/a</div>
<div class="t" style="left:597px;top:669px;line-height:19px;height:19px;letter-spacing:0.416px;width:79px;overflow:hidden;font-style:italic;">Output</div>
<div class="t" style="left:682px;top:669px;line-height:19px;height:19px;letter-spacing:1.06px;width:95px;overflow:hidden;font-style:italic;">n/a</div>
<div class="t" style="left:783px;top:669px;line-height:19px;height:19px;letter-spacing:1.06px;width:84px;overflow:hidden;font-style:italic;">n/a</div>
<div class="t" style="left:873px;top:669px;line-height:19px;height:19px;letter-spacing:1.06px;width:74px;overflow:hidden;font-style:italic;">n/a</div>
<div class="t" style="left:953px;top:669px;line-height:19px;height:19px;letter-spacing:1.06px;width:74px;overflow:hidden;font-style:italic;">n/a</div>
<div class="t" style="left:1033px;top:669px;line-height:19px;height:19px;letter-spacing:1.06px;width:82px;overflow:hidden;font-style:italic;">n/a</div>
<div class="t" style="left:1121px;top:669px;line-height:19px;height:19px;letter-spacing:1.06px;width:74px;overflow:hidden;font-style:italic;">n/a</div>
<div class="t" style="left:1201px;top:669px;line-height:19px;height:19px;letter-spacing:1.06px;width:37px;overflow:hidden;font-style:italic;">n/a</div>
<div style="left:15px;top:705px;width:1223px;height:1px;background:#f0f0f0;"></div>
<div style="left:57px;top:687px;width:1180px;height:18px;background:#ffff00;"></div>
<div style="left:136px;top:687px;width:1px;height:18px;background:#efefef;"></div>
<div style="left:220px;top:687px;width:1px;height:18px;background:#efefef;"></div>
<div style="left:266px;top:687px;width:1px;height:18px;background:#efefef;"></div>
<div style="left:379px;top:687px;width:1px;height:18px;background:#efefef;"></div>
<div style="left:485px;top:687px;width:1px;height:18px;background:#efefef;"></div>
<div style="left:591px;top:687px;width:1px;height:18px;background:#efefef;"></div>
<div style="left:676px;top:687px;width:1px;height:18px;background:#efefef;"></div>
<div style="left:777px;top:687px;width:1px;height:18px;background:#efefef;"></div>
<div style="left:867px;top:687px;width:1px;height:18px;background:#efefef;"></div>
<div style="left:947px;top:687px;width:1px;height:18px;background:#efefef;"></div>
<div style="left:1027px;top:687px;width:1px;height:18px;background:#efefef;"></div>
<div style="left:1115px;top:687px;width:1px;height:18px;background:#efefef;"></div>
<div style="left:1195px;top:687px;width:1px;height:18px;background:#efefef;"></div>
<div class="t" style="left:22px;top:688px;line-height:19px;height:19px;letter-spacing:-0.3px;">30</div>
<div class="t" style="left:62px;top:688px;line-height:19px;height:19px;letter-spacing:-0.95px;">RTC</div>
<div class="t" style="left:142px;top:688px;line-height:19px;height:19px;letter-spacing:-0.95px;">VBAT</div>
<div class="t" style="left:226px;top:688px;line-height:19px;height:19px;font-size:11px;color:#b4b4b4;letter-spacing:1.5px;">&lt;-</div>
<div class="t" style="left:272px;top:688px;line-height:19px;height:19px;letter-spacing:-0.425px;">[30] VBAT</div>
<div class="t" style="left:385px;top:688px;line-height:19px;height:19px;letter-spacing:-0.95px;">VBAT</div>
<div class="t" style="left:491px;top:688px;line-height:19px;height:19px;letter-spacing:1.06px;width:100px;overflow:hidden;font-style:italic;">n/a</div>
<div class="t" style="left:597px;top:688px;line-height:19px;height:19px;letter-spacing:0.303px;width:79px;overflow:hidden;font-style:italic;">Input</div>
<div class="t" style="left:682px;top:688px;line-height:19px;height:19px;letter-spacing:1.06px;width:95px;overflow:hidden;font-style:italic;">n/a</div>
<div class="t" style="left:783px;top:688px;line-height:19px;height:19px;letter-spacing:1.06px;width:84px;overflow:hidden;font-style:italic;">n/a</div>
<div class="t" style="left:873px;top:688px;line-height:19px;height:19px;letter-spacing:1.06px;width:74px;overflow:hidden;font-style:italic;">n/a</div>
<div class="t" style="left:953px;top:688px;line-height:19px;height:19px;letter-spacing:1.06px;width:74px;overflow:hidden;font-style:italic;">n/a</div>
<div class="t" style="left:1033px;top:688px;line-height:19px;height:19px;letter-spacing:1.06px;width:82px;overflow:hidden;font-style:italic;">n/a</div>
<div class="t" style="left:1121px;top:688px;line-height:19px;height:19px;letter-spacing:1.06px;width:74px;overflow:hidden;font-style:italic;">n/a</div>
<div class="t" style="left:1201px;top:688px;line-height:19px;height:19px;letter-spacing:1.06px;width:37px;overflow:hidden;font-style:italic;">n/a</div>
<div style="left:592px;top:706px;width:275px;height:13px;background:#ececec;"></div>
<div class="t" style="left:22px;top:707px;line-height:19px;height:12px;letter-spacing:-0.3px;overflow:hidden;">1</div>
<div class="t" style="left:62px;top:707px;line-height:19px;height:12px;letter-spacing:-0.601px;overflow:hidden;">SDHC</div>
<div class="t" style="left:142px;top:707px;line-height:19px;height:12px;letter-spacing:-0.614px;overflow:hidden;">DATA_1</div>
<div class="t" style="left:226px;top:707px;line-height:19px;height:12px;font-size:11px;color:#8a8a8a;letter-spacing:1.5px;overflow:hidden;">&lt;-&gt;</div>
<div class="t" style="left:272px;top:707px;line-height:19px;height:12px;letter-spacing:-0.597px;overflow:hidden;">[1] SDHC0_D1</div>
<div class="t" style="left:385px;top:707px;line-height:19px;height:12px;letter-spacing:-0.749px;overflow:hidden;">DATA1</div>
<div class="t" style="left:491px;top:707px;line-height:19px;height:12px;letter-spacing:1.06px;width:100px;overflow:hidden;font-style:italic;overflow:hidden;">n/a</div>
<div class="t" style="left:597px;top:707px;line-height:19px;height:12px;letter-spacing:0.524px;width:79px;overflow:hidden;font-style:italic;overflow:hidden;">Input/Output</div>
<div class="t" style="left:682px;top:707px;line-height:19px;height:12px;letter-spacing:1.06px;width:95px;overflow:hidden;font-style:italic;overflow:hidden;">n/a</div>
<div class="t" style="left:783px;top:707px;line-height:19px;height:12px;letter-spacing:1.06px;width:84px;overflow:hidden;font-style:italic;overflow:hidden;">n/a</div>
<div class="t" style="left:873px;top:707px;line-height:19px;height:12px;letter-spacing:-0.279px;width:74px;overflow:hidden;font-style:italic;overflow:hidden;">Fast</div>
<div class="t" style="left:953px;top:707px;line-height:19px;height:12px;letter-spacing:0.001px;width:74px;overflow:hidden;font-style:italic;overflow:hidden;">Disabled</div>
<div class="t" style="left:1033px;top:707px;line-height:19px;height:12px;letter-spacing:0.474px;width:82px;overflow:hidden;overflow:hidden;">High</div>
<div class="t" style="left:1121px;top:707px;line-height:19px;height:12px;letter-spacing:0.029px;width:74px;overflow:hidden;overflow:hidden;">Pullup</div>
<div class="t" style="left:1201px;top:707px;line-height:19px;height:12px;letter-spacing:-0.513px;width:37px;overflow:hidden;overflow:hidden;">Enable</div>
</body></html>
